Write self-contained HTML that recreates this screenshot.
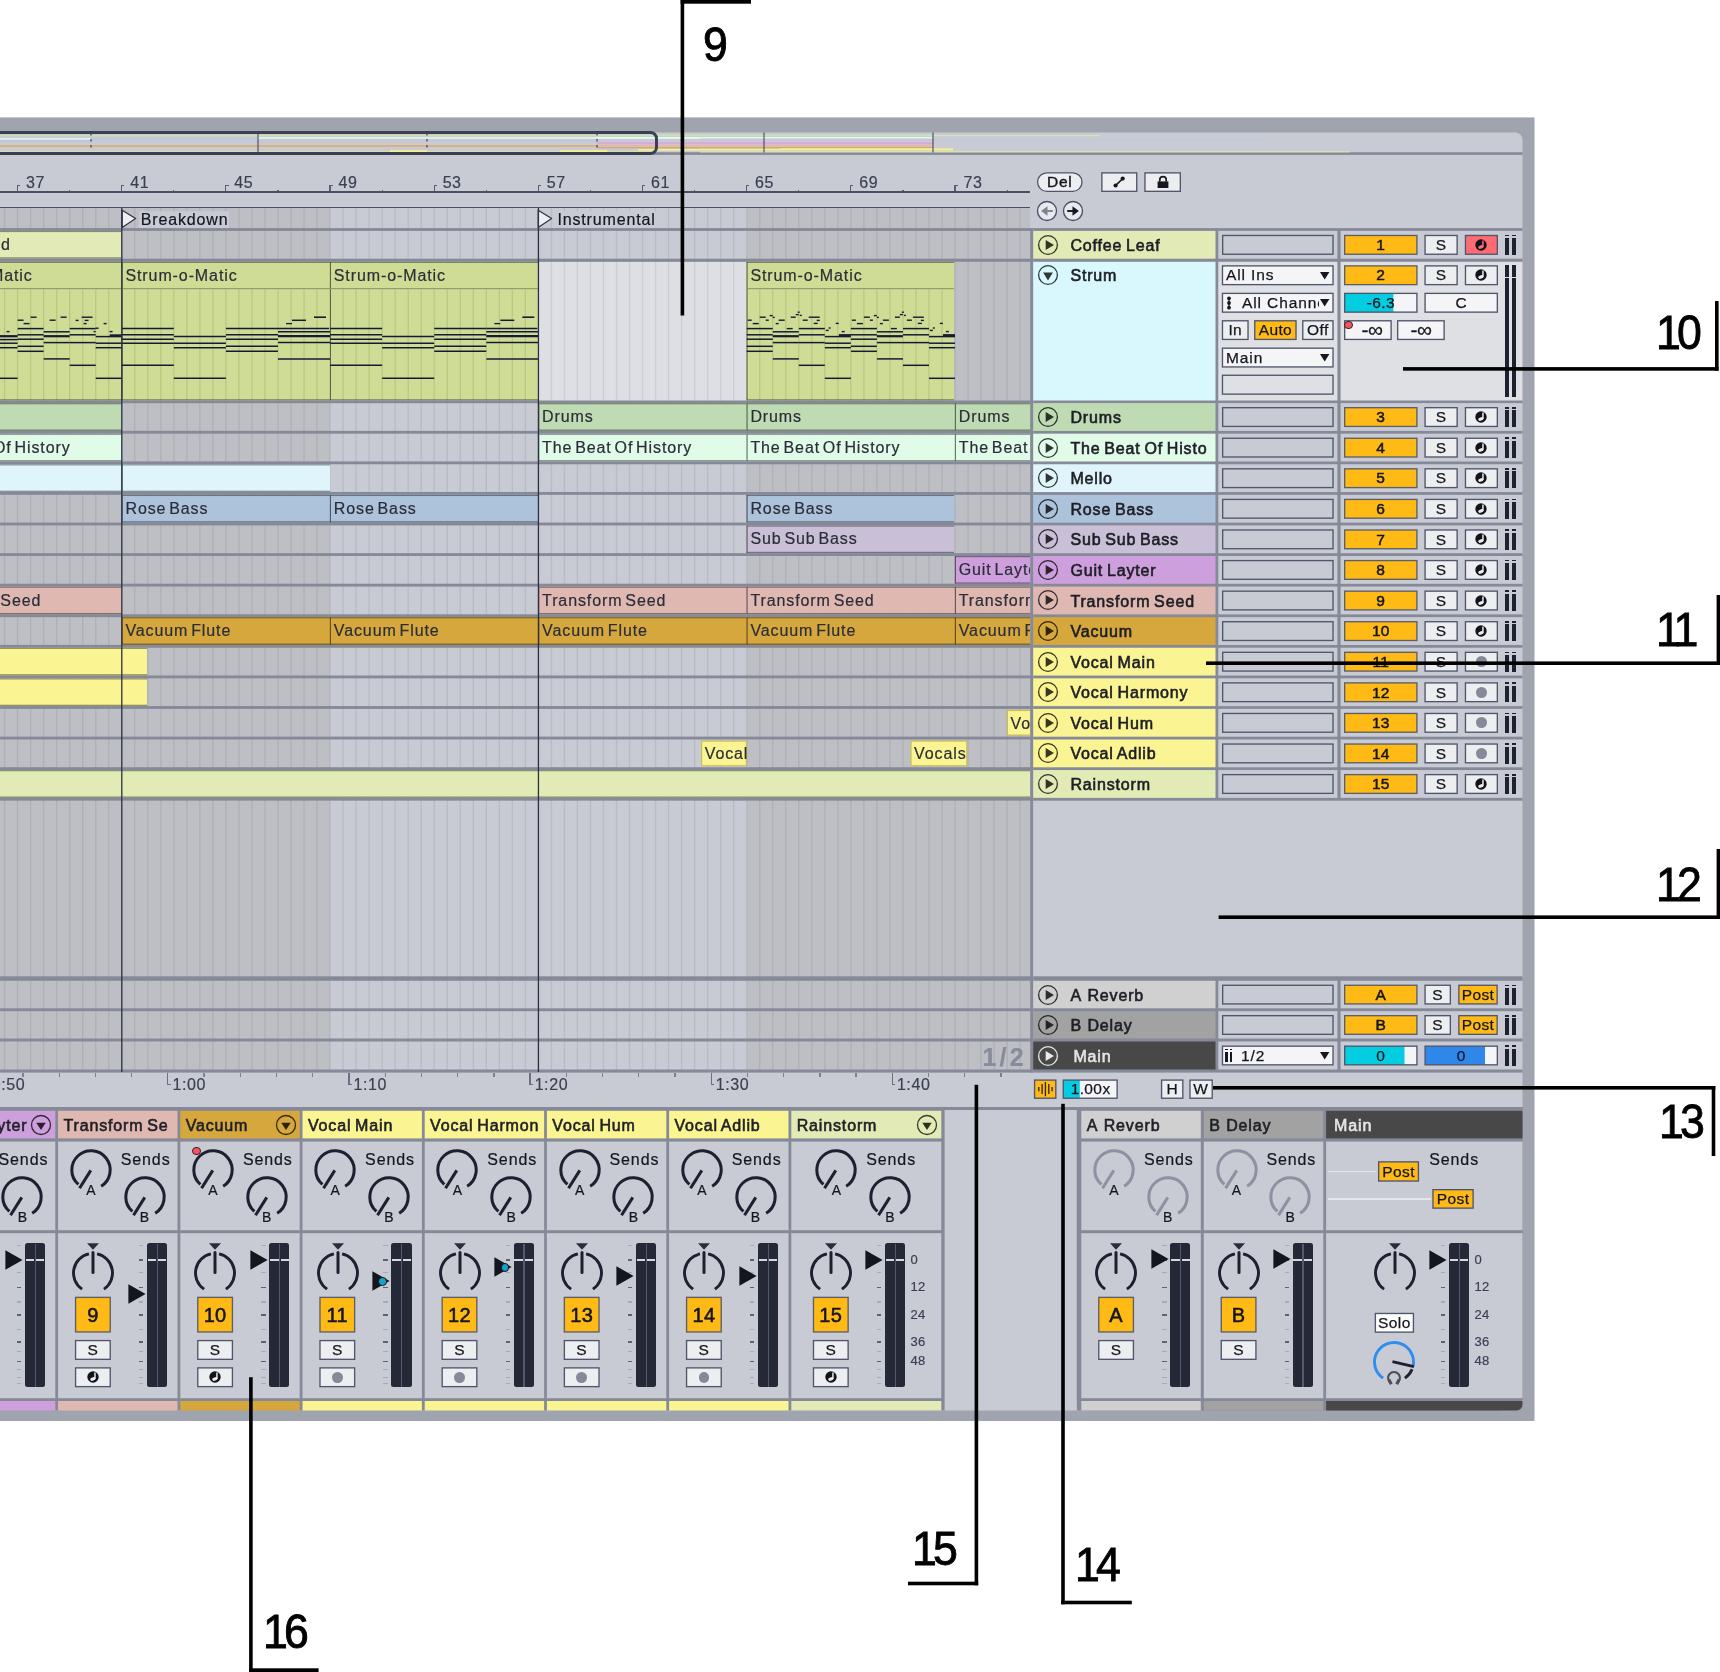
<!DOCTYPE html>
<html lang="en"><head><meta charset="utf-8"><title>Ableton Live – Arrangement and Mixer</title>
<style>
html,body{margin:0;padding:0}
body{width:1720px;height:1672px;position:relative;overflow:hidden;background:#fff;font-family:"Liberation Sans",sans-serif;font-size:16px;color:#15161f;-webkit-text-stroke:.2px}
div,i,svg,.t,.co{position:absolute;box-sizing:border-box;display:block}
svg{overflow:visible}
body>div{will-change:transform}
.t{white-space:nowrap;transform:translateY(-46%);line-height:1;letter-spacing:.9px}
.rn{font-size:16px;color:#3a3f52;letter-spacing:.6px}
.mk{background:#c8cbd4;line-height:17px;padding-left:2px;letter-spacing:.85px}
.kl{font-size:14px;width:20px;text-align:center;letter-spacing:0}
.sc{font-size:13px;color:#3a3f52;letter-spacing:.5px}
.clip{overflow:hidden;white-space:nowrap;line-height:28px;padding-left:3.7px;color:#2b2d38;letter-spacing:.9px;word-spacing:-2.5px}
.clip span{display:inline-block}
.nm{overflow:hidden;white-space:nowrap;line-height:29.2px;padding-left:37.2px;letter-spacing:.85px;word-spacing:-1.5px;color:#1d1e26;-webkit-text-stroke:.6px}
.sh{overflow:hidden;white-space:nowrap;line-height:29px;padding-left:5.4px;letter-spacing:.85px;word-spacing:-1.5px;-webkit-text-stroke:.6px}
.bx{display:flex;align-items:center;justify-content:center;white-space:nowrap;overflow:hidden;letter-spacing:.4px;line-height:1;padding-top:0;font-size:15.5px;-webkit-text-stroke:.25px}
.pill{letter-spacing:.8px;-webkit-text-stroke:.4px}
.num{letter-spacing:.3px;-webkit-text-stroke:.5px}
.big{font-size:20px;letter-spacing:.3px;-webkit-text-stroke:.55px}
.sel{justify-content:flex-start;padding-left:4.2px;letter-spacing:.9px}
.inf{font-size:21px;letter-spacing:-.5px}
.co{font-size:48px;line-height:35px;height:35px;letter-spacing:-4.2px;transform:scaleX(.93);transform-origin:0 0;white-space:nowrap;color:#000;-webkit-text-stroke:.9px #000}
</style></head>
<body>
<div id="window" style="left:0;top:0;width:1720px;height:1672px">
<svg width="1720" height="1672" style="left:0;top:0"><rect x="-30" y="117.4" width="1564.5" height="1303.6" fill="#a0a4ae"/><rect x="-30" y="132.4" width="1552.5" height="1278.1" fill="#c8cbd4" rx="7.5"/></svg>
</div>
<div id="overview" style="left:0;top:130px;width:1523px;height:26px">
<svg width="1523" height="26" style="left:0;top:0"><rect x="0" y="22.2" width="1522.5" height="2.7" fill="#868a98"/><rect x="0" y="5" width="258" height="1.2" fill="#d2e0a0"/><rect x="0" y="8" width="91" height="1.6" fill="#dff3fa"/><rect x="91" y="8" width="167" height="1.2" fill="#b9c7dc"/><rect x="0" y="10.5" width="258" height="1.2" fill="#bcc6d8"/><rect x="0" y="15.3" width="597" height="1.3" fill="#e3a458"/><rect x="0" y="21" width="655" height="1.2" fill="#d5e19a"/><rect x="258" y="5" width="339" height="1.2" fill="#d2e0a0"/><rect x="258" y="7.2" width="442" height="1.5" fill="#e3fbe9"/><rect x="258" y="10.5" width="339" height="1.2" fill="#bcc6d8"/><rect x="258" y="12.5" width="169" height="1.2" fill="#d9c2c0"/><rect x="390" y="20.2" width="37" height="1.8" fill="#f6f08a"/><rect x="560" y="20.2" width="47" height="1.8" fill="#f6f08a"/><rect x="638" y="19" width="62" height="1.6" fill="#f6f08a"/><rect x="597" y="4.6" width="336" height="1.6" fill="#cfe0b4"/><rect x="597" y="7" width="336" height="1.4" fill="#e3fbe9"/><rect x="597" y="9.6" width="336" height="1.4" fill="#c5c8dc"/><rect x="597" y="12.3" width="336" height="1.6" fill="#dba6d8"/><rect x="597" y="14.8" width="336" height="1.4" fill="#e6b0b0"/><rect x="597" y="17" width="336" height="1.3" fill="#e3a458"/><rect x="700" y="18.8" width="80" height="1.6" fill="#f6f08a"/><rect x="780" y="18.2" width="153" height="2.2" fill="#f6f08a"/><rect x="933" y="18.4" width="20" height="2" fill="#f6f08a"/><rect x="933" y="5" width="167" height="1.2" fill="#dbe4b0"/><rect x="933" y="9.6" width="337" height="1" fill="#bccbe0"/><rect x="700" y="21.2" width="650" height="1.2" fill="#dde6a8"/><rect x="90.4" y="3" width="1.2" height="2.5" fill="#3a3f52"/><rect x="90.4" y="9" width="1.2" height="2.5" fill="#3a3f52"/><rect x="90.4" y="15" width="1.2" height="2.5" fill="#3a3f52"/><rect x="257.45" y="2.5" width="1.1" height="20" fill="#454a5e"/><rect x="426.4" y="3" width="1.2" height="2.5" fill="#3a3f52"/><rect x="426.4" y="9" width="1.2" height="2.5" fill="#3a3f52"/><rect x="426.4" y="15" width="1.2" height="2.5" fill="#3a3f52"/><rect x="596.4" y="3" width="1.2" height="2.5" fill="#3a3f52"/><rect x="596.4" y="9" width="1.2" height="2.5" fill="#3a3f52"/><rect x="596.4" y="15" width="1.2" height="2.5" fill="#3a3f52"/><rect x="763.45" y="2.5" width="1.1" height="20" fill="#454a5e"/><rect x="932.45" y="2.5" width="1.1" height="20" fill="#454a5e"/></svg>
<div style="left:-20px;top:.5px;width:677.5px;height:24px;border:3px solid #3a3f54;border-radius:7.5px"></div>
</div>
<div id="ruler" style="left:0;top:156px;width:1031px;height:52px">
<i style="left:-87.17px;top:29px;width:1.2px;height:7px;background:#5a5f72"></i>
<i style="left:-35.09px;top:33.6px;width:1.2px;height:2.4px;background:#5a5f72"></i>
<i style="left:-86.57px;top:29px;width:2.6px;height:1.2px;background:#5a5f72"></i>
<span class="t rn" style="left:-78.17px;top:26.3px">33</span>
<i style="left:16.99px;top:29px;width:1.2px;height:7px;background:#5a5f72"></i>
<i style="left:69.07px;top:33.6px;width:1.2px;height:2.4px;background:#5a5f72"></i>
<i style="left:17.59px;top:29px;width:2.6px;height:1.2px;background:#5a5f72"></i>
<span class="t rn" style="left:25.99px;top:26.3px">37</span>
<i style="left:121.15px;top:29px;width:1.2px;height:7px;background:#5a5f72"></i>
<i style="left:173.23px;top:33.6px;width:1.2px;height:2.4px;background:#5a5f72"></i>
<i style="left:121.75px;top:29px;width:2.6px;height:1.2px;background:#5a5f72"></i>
<span class="t rn" style="left:130.15px;top:26.3px">41</span>
<i style="left:225.31px;top:29px;width:1.2px;height:7px;background:#5a5f72"></i>
<i style="left:277.39px;top:33.6px;width:1.2px;height:2.4px;background:#5a5f72"></i>
<i style="left:225.91px;top:29px;width:2.6px;height:1.2px;background:#5a5f72"></i>
<span class="t rn" style="left:234.31px;top:26.3px">45</span>
<i style="left:329.47px;top:29px;width:1.2px;height:7px;background:#5a5f72"></i>
<i style="left:381.55px;top:33.6px;width:1.2px;height:2.4px;background:#5a5f72"></i>
<i style="left:330.07px;top:29px;width:2.6px;height:1.2px;background:#5a5f72"></i>
<span class="t rn" style="left:338.47px;top:26.3px">49</span>
<i style="left:433.63px;top:29px;width:1.2px;height:7px;background:#5a5f72"></i>
<i style="left:485.71px;top:33.6px;width:1.2px;height:2.4px;background:#5a5f72"></i>
<i style="left:434.23px;top:29px;width:2.6px;height:1.2px;background:#5a5f72"></i>
<span class="t rn" style="left:442.63px;top:26.3px">53</span>
<i style="left:537.79px;top:29px;width:1.2px;height:7px;background:#5a5f72"></i>
<i style="left:589.87px;top:33.6px;width:1.2px;height:2.4px;background:#5a5f72"></i>
<i style="left:538.39px;top:29px;width:2.6px;height:1.2px;background:#5a5f72"></i>
<span class="t rn" style="left:546.79px;top:26.3px">57</span>
<i style="left:641.95px;top:29px;width:1.2px;height:7px;background:#5a5f72"></i>
<i style="left:694.03px;top:33.6px;width:1.2px;height:2.4px;background:#5a5f72"></i>
<i style="left:642.55px;top:29px;width:2.6px;height:1.2px;background:#5a5f72"></i>
<span class="t rn" style="left:650.95px;top:26.3px">61</span>
<i style="left:746.11px;top:29px;width:1.2px;height:7px;background:#5a5f72"></i>
<i style="left:798.19px;top:33.6px;width:1.2px;height:2.4px;background:#5a5f72"></i>
<i style="left:746.71px;top:29px;width:2.6px;height:1.2px;background:#5a5f72"></i>
<span class="t rn" style="left:755.11px;top:26.3px">65</span>
<i style="left:850.27px;top:29px;width:1.2px;height:7px;background:#5a5f72"></i>
<i style="left:902.35px;top:33.6px;width:1.2px;height:2.4px;background:#5a5f72"></i>
<i style="left:850.87px;top:29px;width:2.6px;height:1.2px;background:#5a5f72"></i>
<span class="t rn" style="left:859.27px;top:26.3px">69</span>
<i style="left:954.43px;top:29px;width:1.2px;height:7px;background:#5a5f72"></i>
<i style="left:1006.51px;top:33.6px;width:1.2px;height:2.4px;background:#5a5f72"></i>
<i style="left:955.03px;top:29px;width:2.6px;height:1.2px;background:#5a5f72"></i>
<span class="t rn" style="left:963.43px;top:26.3px">73</span>
<i style="left:0;top:35.4px;width:1030px;height:1.2px;background:#4a4f62"></i>
<i style="left:0;top:51.4px;width:1030px;height:1.2px;background:#4a4f62"></i>
</div>
<div id="arrangement" style="left:0;top:0;width:1034px;height:1073px">
<div style="left:0px;top:208px;width:1030.2px;height:864px;background:#bebfc4"></div>
<div style="left:330.07px;top:208px;width:416.64px;height:864px;background:#c8cbd4"></div>
<div style="left:538.39px;top:261.6px;width:208.32px;height:139px;background:#dedfe4"></div>
<svg width="1034" height="1073" style="left:0;top:0"><path d="M4.57 208V1072M17.59 208V1072M30.61 208V1072M43.63 208V1072M56.65 208V1072M69.67 208V1072M82.69 208V1072M95.71 208V1072M108.73 208V1072M121.75 208V1072M134.77 208V1072M147.79 208V1072M160.81 208V1072M173.83 208V1072M186.85 208V1072M199.87 208V1072M212.89 208V1072M225.91 208V1072M238.93 208V1072M251.95 208V1072M264.97 208V1072M277.99 208V1072M291.01 208V1072M304.03 208V1072M317.05 208V1072M330.07 208V1072M343.09 208V1072M356.11 208V1072M369.13 208V1072M382.15 208V1072M395.17 208V1072M408.19 208V1072M421.21 208V1072M434.23 208V1072M447.25 208V1072M460.27 208V1072M473.29 208V1072M486.31 208V1072M499.33 208V1072M512.35 208V1072M525.37 208V1072M538.39 208V1072M551.41 208V1072M564.43 208V1072M577.45 208V1072M590.47 208V1072M603.49 208V1072M616.51 208V1072M629.53 208V1072M642.55 208V1072M655.57 208V1072M668.59 208V1072M681.61 208V1072M694.63 208V1072M707.65 208V1072M720.67 208V1072M733.69 208V1072M746.71 208V1072M759.73 208V1072M772.75 208V1072M785.77 208V1072M798.79 208V1072M811.81 208V1072M824.83 208V1072M837.85 208V1072M850.87 208V1072M863.89 208V1072M876.91 208V1072M889.93 208V1072M902.95 208V1072M915.97 208V1072M928.99 208V1072M942.01 208V1072M955.03 208V1072M968.05 208V1072M981.07 208V1072M994.09 208V1072M1007.11 208V1072M1020.13 208V1072" stroke="#000" stroke-opacity=".075" stroke-width="1.4" fill="none"/></svg>
<svg width="1034" height="1073" style="left:0;top:0"><rect x="-86.57" y="230.9" width="208.32" height="27.8" fill="#e2ebb6"/><rect x="-86.57" y="230.9" width="208.32" height="1.2" fill="#878d6d"/><rect x="-86.57" y="257.3" width="208.32" height="1.4" fill="#878d6d"/><rect x="-60" y="403.1" width="181.75" height="27.8" fill="#bedbb4"/><rect x="-60" y="403.1" width="181.75" height="1.2" fill="#72836c"/><rect x="-60" y="429.5" width="181.75" height="1.4" fill="#72836c"/><rect x="538.39" y="403.1" width="208.32" height="27.8" fill="#bedbb4"/><rect x="538.39" y="403.1" width="208.32" height="1.2" fill="#72836c"/><rect x="538.39" y="429.5" width="208.32" height="1.4" fill="#72836c"/><rect x="538.19" y="403.1" width="1.1" height="27.8" fill="#556251"/><rect x="746.71" y="403.1" width="208.32" height="27.8" fill="#bedbb4"/><rect x="746.71" y="403.1" width="208.32" height="1.2" fill="#72836c"/><rect x="746.71" y="429.5" width="208.32" height="1.4" fill="#72836c"/><rect x="746.51" y="403.1" width="1.1" height="27.8" fill="#556251"/><rect x="955.03" y="403.1" width="75.17" height="27.8" fill="#bedbb4"/><rect x="955.03" y="403.1" width="75.17" height="1.2" fill="#72836c"/><rect x="955.03" y="429.5" width="75.17" height="1.4" fill="#72836c"/><rect x="954.83" y="403.1" width="1.1" height="27.8" fill="#556251"/><rect x="-86.57" y="433.68" width="208.32" height="27.8" fill="#e0fbe8"/><rect x="-86.57" y="433.68" width="208.32" height="1.2" fill="#86968b"/><rect x="-86.57" y="460.08" width="208.32" height="1.4" fill="#86968b"/><rect x="538.39" y="433.68" width="208.32" height="27.8" fill="#e0fbe8"/><rect x="538.39" y="433.68" width="208.32" height="1.2" fill="#86968b"/><rect x="538.39" y="460.08" width="208.32" height="1.4" fill="#86968b"/><rect x="538.19" y="433.68" width="1.1" height="27.8" fill="#647068"/><rect x="746.71" y="433.68" width="208.32" height="27.8" fill="#e0fbe8"/><rect x="746.71" y="433.68" width="208.32" height="1.2" fill="#86968b"/><rect x="746.71" y="460.08" width="208.32" height="1.4" fill="#86968b"/><rect x="746.51" y="433.68" width="1.1" height="27.8" fill="#647068"/><rect x="955.03" y="433.68" width="75.17" height="27.8" fill="#e0fbe8"/><rect x="955.03" y="433.68" width="75.17" height="1.2" fill="#86968b"/><rect x="955.03" y="460.08" width="75.17" height="1.4" fill="#86968b"/><rect x="954.83" y="433.68" width="1.1" height="27.8" fill="#647068"/><rect x="-60" y="464.26" width="181.75" height="27.8" fill="#e0f5fb"/><rect x="-60" y="464.26" width="181.75" height="1.2" fill="#869396"/><rect x="-60" y="490.66" width="181.75" height="1.4" fill="#869396"/><rect x="121.75" y="464.26" width="208.32" height="27.8" fill="#e0f5fb"/><rect x="121.75" y="464.26" width="208.32" height="1.2" fill="#869396"/><rect x="121.75" y="490.66" width="208.32" height="1.4" fill="#869396"/><rect x="121.55" y="464.26" width="1.1" height="27.8" fill="#646e70"/><rect x="121.75" y="494.84" width="208.32" height="27.8" fill="#adc3dc"/><rect x="121.75" y="494.84" width="208.32" height="1.2" fill="#677584"/><rect x="121.75" y="521.24" width="208.32" height="1.4" fill="#677584"/><rect x="121.55" y="494.84" width="1.1" height="27.8" fill="#4d5763"/><rect x="330.07" y="494.84" width="208.32" height="27.8" fill="#adc3dc"/><rect x="330.07" y="494.84" width="208.32" height="1.2" fill="#677584"/><rect x="330.07" y="521.24" width="208.32" height="1.4" fill="#677584"/><rect x="329.87" y="494.84" width="1.1" height="27.8" fill="#4d5763"/><rect x="746.71" y="494.84" width="207.32" height="27.8" fill="#adc3dc"/><rect x="746.71" y="494.84" width="207.32" height="1.2" fill="#677584"/><rect x="746.71" y="521.24" width="207.32" height="1.4" fill="#677584"/><rect x="746.51" y="494.84" width="1.1" height="27.8" fill="#4d5763"/><rect x="746.71" y="525.42" width="207.32" height="27.8" fill="#c9bfd6"/><rect x="746.71" y="525.42" width="207.32" height="1.2" fill="#787280"/><rect x="746.71" y="551.82" width="207.32" height="1.4" fill="#787280"/><rect x="746.51" y="525.42" width="1.1" height="27.8" fill="#5a5560"/><rect x="955.03" y="556" width="75.17" height="27.8" fill="#cd9fdc"/><rect x="955.03" y="556" width="75.17" height="1.2" fill="#7b5f84"/><rect x="955.03" y="582.4" width="75.17" height="1.4" fill="#7b5f84"/><rect x="954.83" y="556" width="1.1" height="27.8" fill="#5c4763"/><rect x="-86.57" y="586.58" width="208.32" height="27.8" fill="#dfb8b2"/><rect x="-86.57" y="586.58" width="208.32" height="1.2" fill="#856e6a"/><rect x="-86.57" y="612.98" width="208.32" height="1.4" fill="#856e6a"/><rect x="538.39" y="586.58" width="208.32" height="27.8" fill="#dfb8b2"/><rect x="538.39" y="586.58" width="208.32" height="1.2" fill="#856e6a"/><rect x="538.39" y="612.98" width="208.32" height="1.4" fill="#856e6a"/><rect x="538.19" y="586.58" width="1.1" height="27.8" fill="#645250"/><rect x="746.71" y="586.58" width="208.32" height="27.8" fill="#dfb8b2"/><rect x="746.71" y="586.58" width="208.32" height="1.2" fill="#856e6a"/><rect x="746.71" y="612.98" width="208.32" height="1.4" fill="#856e6a"/><rect x="746.51" y="586.58" width="1.1" height="27.8" fill="#645250"/><rect x="955.03" y="586.58" width="75.17" height="27.8" fill="#dfb8b2"/><rect x="955.03" y="586.58" width="75.17" height="1.2" fill="#856e6a"/><rect x="955.03" y="612.98" width="75.17" height="1.4" fill="#856e6a"/><rect x="954.83" y="586.58" width="1.1" height="27.8" fill="#645250"/><rect x="121.75" y="617.16" width="208.32" height="27.8" fill="#d5a73c"/><rect x="121.75" y="617.16" width="208.32" height="1.2" fill="#7f6424"/><rect x="121.75" y="643.56" width="208.32" height="1.4" fill="#7f6424"/><rect x="121.55" y="617.16" width="1.1" height="27.8" fill="#5f4b1b"/><rect x="330.07" y="617.16" width="208.32" height="27.8" fill="#d5a73c"/><rect x="330.07" y="617.16" width="208.32" height="1.2" fill="#7f6424"/><rect x="330.07" y="643.56" width="208.32" height="1.4" fill="#7f6424"/><rect x="329.87" y="617.16" width="1.1" height="27.8" fill="#5f4b1b"/><rect x="538.39" y="617.16" width="208.32" height="27.8" fill="#d5a73c"/><rect x="538.39" y="617.16" width="208.32" height="1.2" fill="#7f6424"/><rect x="538.39" y="643.56" width="208.32" height="1.4" fill="#7f6424"/><rect x="538.19" y="617.16" width="1.1" height="27.8" fill="#5f4b1b"/><rect x="746.71" y="617.16" width="208.32" height="27.8" fill="#d5a73c"/><rect x="746.71" y="617.16" width="208.32" height="1.2" fill="#7f6424"/><rect x="746.71" y="643.56" width="208.32" height="1.4" fill="#7f6424"/><rect x="746.51" y="617.16" width="1.1" height="27.8" fill="#5f4b1b"/><rect x="955.03" y="617.16" width="75.17" height="27.8" fill="#d5a73c"/><rect x="955.03" y="617.16" width="75.17" height="1.2" fill="#7f6424"/><rect x="955.03" y="643.56" width="75.17" height="1.4" fill="#7f6424"/><rect x="954.83" y="617.16" width="1.1" height="27.8" fill="#5f4b1b"/><rect x="-60" y="647.74" width="207" height="27.8" fill="#faf492"/><rect x="-60" y="647.74" width="207" height="1.2" fill="#969257"/><rect x="-60" y="674.14" width="207" height="1.4" fill="#969257"/><rect x="-60" y="678.32" width="207" height="27.8" fill="#faf492"/><rect x="-60" y="678.32" width="207" height="1.2" fill="#969257"/><rect x="-60" y="704.72" width="207" height="1.4" fill="#969257"/><rect x="1006.8" y="709.9" width="23.4" height="25.8" fill="#c9be5c"/><rect x="1008" y="711.1" width="22.2" height="23.4" fill="#faf492"/><rect x="701" y="740.48" width="46" height="25.8" fill="#c9be5c"/><rect x="702.2" y="741.68" width="43.6" height="23.4" fill="#faf492"/><rect x="910.4" y="740.48" width="57" height="25.8" fill="#c9be5c"/><rect x="911.6" y="741.68" width="54.6" height="23.4" fill="#faf492"/><rect x="-60" y="770.06" width="1090.2" height="27.8" fill="#e2ebb6"/><rect x="-60" y="770.06" width="1090.2" height="1.2" fill="#878d6d"/><rect x="-60" y="796.46" width="1090.2" height="1.4" fill="#878d6d"/><rect x="-86.57" y="261.8" width="208.32" height="138.7" fill="#cfdc95"/><rect x="-86.57" y="261.8" width="208.32" height="1.2" fill="#7c8459"/><rect x="-86.57" y="399.2" width="208.32" height="1.3" fill="#7c8459"/><rect x="-86.77" y="261.8" width="1.1" height="138.7" fill="#5d6343"/><rect x="-86.57" y="288" width="208.32" height="1.2" fill="#959e6b"/><rect x="121.75" y="261.8" width="208.32" height="138.7" fill="#cfdc95"/><rect x="121.75" y="261.8" width="208.32" height="1.2" fill="#7c8459"/><rect x="121.75" y="399.2" width="208.32" height="1.3" fill="#7c8459"/><rect x="121.55" y="261.8" width="1.1" height="138.7" fill="#5d6343"/><rect x="121.75" y="288" width="208.32" height="1.2" fill="#959e6b"/><rect x="330.07" y="261.8" width="208.32" height="138.7" fill="#cfdc95"/><rect x="330.07" y="261.8" width="208.32" height="1.2" fill="#7c8459"/><rect x="330.07" y="399.2" width="208.32" height="1.3" fill="#7c8459"/><rect x="329.87" y="261.8" width="1.1" height="138.7" fill="#5d6343"/><rect x="330.07" y="288" width="208.32" height="1.2" fill="#959e6b"/><rect x="746.71" y="261.8" width="207.32" height="138.7" fill="#cfdc95"/><rect x="746.71" y="261.8" width="207.32" height="1.2" fill="#7c8459"/><rect x="746.71" y="399.2" width="207.32" height="1.3" fill="#7c8459"/><rect x="746.51" y="261.8" width="1.1" height="138.7" fill="#5d6343"/><rect x="746.71" y="288" width="207.32" height="1.2" fill="#959e6b"/></svg>
<div class="clip" style="left:-86.57px;top:230.9px;width:208.32px;height:27.8px;"><span style="width:93.6px;text-align:right">nd</span></div>
<div class="clip" style="left:538.39px;top:403.1px;width:208.32px;height:27.8px;"><span>Drums</span></div>
<div class="clip" style="left:746.71px;top:403.1px;width:208.32px;height:27.8px;"><span>Drums</span></div>
<div class="clip" style="left:955.03px;top:403.1px;width:75.17px;height:27.8px;"><span>Drums</span></div>
<div class="clip" style="left:-86.57px;top:433.68px;width:208.32px;height:27.8px;"><span style="width:153.5px;text-align:right">The Beat Of History</span></div>
<div class="clip" style="left:538.39px;top:433.68px;width:208.32px;height:27.8px;"><span>The Beat Of History</span></div>
<div class="clip" style="left:746.71px;top:433.68px;width:208.32px;height:27.8px;"><span>The Beat Of History</span></div>
<div class="clip" style="left:955.03px;top:433.68px;width:75.17px;height:27.8px;"><span>The Beat Of History</span></div>
<div class="clip" style="left:121.75px;top:494.84px;width:208.32px;height:27.8px;"><span>Rose Bass</span></div>
<div class="clip" style="left:330.07px;top:494.84px;width:208.32px;height:27.8px;"><span>Rose Bass</span></div>
<div class="clip" style="left:746.71px;top:494.84px;width:207.32px;height:27.8px;"><span>Rose Bass</span></div>
<div class="clip" style="left:746.71px;top:525.42px;width:207.32px;height:27.8px;"><span>Sub Sub Bass</span></div>
<div class="clip" style="left:955.03px;top:556px;width:75.17px;height:27.8px;"><span>Guit Layter</span></div>
<div class="clip" style="left:-86.57px;top:586.58px;width:208.32px;height:27.8px;"><span style="width:123px;text-align:right">Transform Seed</span></div>
<div class="clip" style="left:538.39px;top:586.58px;width:208.32px;height:27.8px;"><span>Transform Seed</span></div>
<div class="clip" style="left:746.71px;top:586.58px;width:208.32px;height:27.8px;"><span>Transform Seed</span></div>
<div class="clip" style="left:955.03px;top:586.58px;width:75.17px;height:27.8px;"><span>Transform Seed</span></div>
<div class="clip" style="left:121.75px;top:617.16px;width:208.32px;height:27.8px;"><span>Vacuum Flute</span></div>
<div class="clip" style="left:330.07px;top:617.16px;width:208.32px;height:27.8px;"><span>Vacuum Flute</span></div>
<div class="clip" style="left:538.39px;top:617.16px;width:208.32px;height:27.8px;"><span>Vacuum Flute</span></div>
<div class="clip" style="left:746.71px;top:617.16px;width:208.32px;height:27.8px;"><span>Vacuum Flute</span></div>
<div class="clip" style="left:955.03px;top:617.16px;width:75.17px;height:27.8px;"><span>Vacuum Flute</span></div>
<div class="clip" style="left:1006.8px;top:709.9px;width:23.4px;height:25.8px;"><span>Vocals</span></div>
<div class="clip" style="left:701px;top:740.48px;width:46px;height:25.8px;"><span>Vocals</span></div>
<div class="clip" style="left:910.4px;top:740.48px;width:57px;height:25.8px;"><span>Vocals</span></div>
<div class="clip" style="left:-86.57px;top:261.8px;width:208.32px;height:27.4px;"><span style="width:115.6px;text-align:right">Strum-o-Matic</span></div>
<div class="clip" style="left:121.75px;top:261.8px;width:208.32px;height:27.4px;"><span>Strum-o-Matic</span></div>
<div class="clip" style="left:330.07px;top:261.8px;width:208.32px;height:27.4px;"><span>Strum-o-Matic</span></div>
<div class="clip" style="left:746.71px;top:261.8px;width:207.32px;height:27.4px;"><span>Strum-o-Matic</span></div>
<svg width="1034" height="410" style="left:0;top:0"><path d="M4.57 289.2V400.5M17.59 289.2V400.5M30.61 289.2V400.5M43.63 289.2V400.5M56.65 289.2V400.5M69.67 289.2V400.5M82.69 289.2V400.5M95.71 289.2V400.5M108.73 289.2V400.5M134.77 289.2V400.5M147.79 289.2V400.5M160.81 289.2V400.5M173.83 289.2V400.5M186.85 289.2V400.5M199.87 289.2V400.5M212.89 289.2V400.5M225.91 289.2V400.5M238.93 289.2V400.5M251.95 289.2V400.5M264.97 289.2V400.5M277.99 289.2V400.5M291.01 289.2V400.5M304.03 289.2V400.5M317.05 289.2V400.5M343.09 289.2V400.5M356.11 289.2V400.5M369.13 289.2V400.5M382.15 289.2V400.5M395.17 289.2V400.5M408.19 289.2V400.5M421.21 289.2V400.5M434.23 289.2V400.5M447.25 289.2V400.5M460.27 289.2V400.5M473.29 289.2V400.5M486.31 289.2V400.5M499.33 289.2V400.5M512.35 289.2V400.5M525.37 289.2V400.5M759.73 289.2V400.5M772.75 289.2V400.5M785.77 289.2V400.5M798.79 289.2V400.5M811.81 289.2V400.5M824.83 289.2V400.5M837.85 289.2V400.5M850.87 289.2V400.5M863.89 289.2V400.5M876.91 289.2V400.5M889.93 289.2V400.5M902.95 289.2V400.5M915.97 289.2V400.5M928.99 289.2V400.5M942.01 289.2V400.5" stroke="#4a5a10" stroke-opacity=".15" stroke-width="1.3" fill="none"/></svg>
<svg width="1034" height="410" style="left:0;top:0" stroke="#161a38" fill="none"><path d="M121.75 328.6H173.83" stroke-width="1.5"/><path d="M121.75 334.8H173.83" stroke-width="1.5"/><path d="M121.75 339.2H173.83" stroke-width="1.5"/><path d="M121.75 343.2H173.83" stroke-width="1.5"/><path d="M121.75 365.3H173.83" stroke-width="1.5"/><path d="M173.83 336.6H225.91" stroke-width="1.5"/><path d="M173.83 343.2H225.91" stroke-width="1.5"/><path d="M173.83 347.7H225.91" stroke-width="1.5"/><path d="M173.83 378.3H225.91" stroke-width="1.5"/><path d="M225.91 328.6H277.99" stroke-width="1.5"/><path d="M225.91 334.8H277.99" stroke-width="1.5"/><path d="M225.91 339.2H277.99" stroke-width="1.5"/><path d="M225.91 346.3H277.99" stroke-width="1.5"/><path d="M225.91 351.3H277.99" stroke-width="1.5"/><path d="M277.99 331.8H330.07" stroke-width="1.5"/><path d="M277.99 336.2H330.07" stroke-width="2.2"/><path d="M277.99 342.6H330.07" stroke-width="1.5"/><path d="M277.99 358.9H330.07" stroke-width="1.5"/><path d="M277.99 328.6H329.07" stroke-width="1.5"/><path d="M285.99 323.6H291.99" stroke-width="1.3"/><path d="M291.99 320.3H305.99" stroke-width="1.5"/><path d="M313.99 317.2H325.99" stroke-width="1.6"/><path d="M330.07 328.6H382.15" stroke-width="1.5"/><path d="M330.07 334.8H382.15" stroke-width="1.5"/><path d="M330.07 339.2H382.15" stroke-width="1.5"/><path d="M330.07 343.2H382.15" stroke-width="1.5"/><path d="M330.07 365.3H382.15" stroke-width="1.5"/><path d="M382.15 336.6H434.23" stroke-width="1.5"/><path d="M382.15 343.2H434.23" stroke-width="1.5"/><path d="M382.15 347.7H434.23" stroke-width="1.5"/><path d="M382.15 378.3H434.23" stroke-width="1.5"/><path d="M434.23 328.6H486.31" stroke-width="1.5"/><path d="M434.23 334.8H486.31" stroke-width="1.5"/><path d="M434.23 339.2H486.31" stroke-width="1.5"/><path d="M434.23 346.3H486.31" stroke-width="1.5"/><path d="M434.23 351.3H486.31" stroke-width="1.5"/><path d="M486.31 331.8H538.39" stroke-width="1.5"/><path d="M486.31 336.2H538.39" stroke-width="2.2"/><path d="M486.31 342.6H538.39" stroke-width="1.5"/><path d="M486.31 358.9H538.39" stroke-width="1.5"/><path d="M486.31 328.6H537.39" stroke-width="1.5"/><path d="M494.31 323.6H500.31" stroke-width="1.3"/><path d="M500.31 320.3H514.31" stroke-width="1.5"/><path d="M522.31 317.2H534.31" stroke-width="1.6"/><path d="M746.71 328.6H772.75" stroke-width="1.5"/><path d="M746.71 334.8H772.75" stroke-width="1.5"/><path d="M746.71 339.2H772.75" stroke-width="1.5"/><path d="M746.71 346.3H772.75" stroke-width="1.5"/><path d="M746.71 351.3H772.75" stroke-width="1.5"/><path d="M772.75 331.8H798.79" stroke-width="1.5"/><path d="M772.75 336.2H798.79" stroke-width="2.2"/><path d="M772.75 342.6H798.79" stroke-width="1.5"/><path d="M772.75 358.9H798.79" stroke-width="1.5"/><path d="M798.79 328.6H824.83" stroke-width="1.5"/><path d="M798.79 334.8H824.83" stroke-width="1.5"/><path d="M798.79 342.6H824.83" stroke-width="1.5"/><path d="M798.79 365.3H824.83" stroke-width="1.5"/><path d="M824.83 336.6H850.87" stroke-width="1.5"/><path d="M824.83 343.2H850.87" stroke-width="1.5"/><path d="M824.83 347.7H850.87" stroke-width="1.5"/><path d="M824.83 378.3H850.87" stroke-width="1.5"/><path d="M838.83 335.2H850.87" stroke-width="2.2"/><path d="M747.71 320.2H751.71" stroke-width="1.4"/><path d="M752.71 323.6H758.71" stroke-width="1.4"/><path d="M759.71 317.2H765.71" stroke-width="1.4"/><path d="M765.71 320.2H768.71" stroke-width="1.4"/><path d="M769.71 315.6H772.71" stroke-width="1.4"/><path d="M772.71 317.4H774.71" stroke-width="1.4"/><path d="M775.71 323.6H778.71" stroke-width="1.4"/><path d="M778.71 320.2H784.71" stroke-width="1.4"/><path d="M790.71 317.2H795.71" stroke-width="1.4"/><path d="M795.71 314.6H798.71" stroke-width="1.4"/><path d="M797.71 312.2H799.71" stroke-width="1.4"/><path d="M799.71 315.4H801.71" stroke-width="1.4"/><path d="M802.71 320.2H807.71" stroke-width="1.4"/><path d="M808.71 317.2H819.71" stroke-width="1.4"/><path d="M813.71 323.4H817.71" stroke-width="1.4"/><path d="M816.71 320.4H819.71" stroke-width="1.4"/><path d="M825.71 330.4H828.71" stroke-width="1.4"/><path d="M828.71 328H830.71" stroke-width="1.4"/><path d="M835.71 323.4H838.71" stroke-width="1.4"/><path d="M841.71 331.6H844.71" stroke-width="1.4"/><path d="M786.71 328.6H792.71" stroke-width="1.4"/><path d="M850.87 328.6H876.91" stroke-width="1.5"/><path d="M850.87 334.8H876.91" stroke-width="1.5"/><path d="M850.87 339.2H876.91" stroke-width="1.5"/><path d="M850.87 346.3H876.91" stroke-width="1.5"/><path d="M850.87 351.3H876.91" stroke-width="1.5"/><path d="M876.91 331.8H902.95" stroke-width="1.5"/><path d="M876.91 336.2H902.95" stroke-width="2.2"/><path d="M876.91 342.6H902.95" stroke-width="1.5"/><path d="M876.91 358.9H902.95" stroke-width="1.5"/><path d="M902.95 328.6H928.99" stroke-width="1.5"/><path d="M902.95 334.8H928.99" stroke-width="1.5"/><path d="M902.95 342.6H928.99" stroke-width="1.5"/><path d="M902.95 365.3H928.99" stroke-width="1.5"/><path d="M928.99 336.6H955.03" stroke-width="1.5"/><path d="M928.99 343.2H955.03" stroke-width="1.5"/><path d="M928.99 347.7H955.03" stroke-width="1.5"/><path d="M928.99 378.3H955.03" stroke-width="1.5"/><path d="M942.99 335.2H955.03" stroke-width="2.2"/><path d="M851.87 320.2H855.87" stroke-width="1.4"/><path d="M856.87 323.6H862.87" stroke-width="1.4"/><path d="M863.87 317.2H869.87" stroke-width="1.4"/><path d="M869.87 320.2H872.87" stroke-width="1.4"/><path d="M873.87 315.6H876.87" stroke-width="1.4"/><path d="M876.87 317.4H878.87" stroke-width="1.4"/><path d="M879.87 323.6H882.87" stroke-width="1.4"/><path d="M882.87 320.2H888.87" stroke-width="1.4"/><path d="M894.87 317.2H899.87" stroke-width="1.4"/><path d="M899.87 314.6H902.87" stroke-width="1.4"/><path d="M901.87 312.2H903.87" stroke-width="1.4"/><path d="M903.87 315.4H905.87" stroke-width="1.4"/><path d="M906.87 320.2H911.87" stroke-width="1.4"/><path d="M912.87 317.2H923.87" stroke-width="1.4"/><path d="M917.87 323.4H921.87" stroke-width="1.4"/><path d="M920.87 320.4H923.87" stroke-width="1.4"/><path d="M929.87 330.4H932.87" stroke-width="1.4"/><path d="M932.87 328H934.87" stroke-width="1.4"/><path d="M939.87 323.4H942.87" stroke-width="1.4"/><path d="M945.87 331.6H948.87" stroke-width="1.4"/><path d="M890.87 328.6H896.87" stroke-width="1.4"/><path d="M0 336.2H17.59" stroke-width="2.2"/><path d="M0 339.6H17.59" stroke-width="1.5"/><path d="M0 343.2H17.59" stroke-width="1.5"/><path d="M0 347.7H17.59" stroke-width="1.5"/><path d="M0 378.3H17.59" stroke-width="1.5"/><path d="M17.59 328.6H43.63" stroke-width="1.5"/><path d="M17.59 334.8H43.63" stroke-width="1.5"/><path d="M17.59 339.2H43.63" stroke-width="1.5"/><path d="M17.59 346.3H43.63" stroke-width="1.5"/><path d="M17.59 351.3H43.63" stroke-width="1.5"/><path d="M43.63 331.8H69.67" stroke-width="1.5"/><path d="M43.63 336.2H69.67" stroke-width="2.2"/><path d="M43.63 342.6H69.67" stroke-width="1.5"/><path d="M43.63 358.9H69.67" stroke-width="1.5"/><path d="M69.67 328.6H95.71" stroke-width="1.5"/><path d="M69.67 334.8H95.71" stroke-width="1.5"/><path d="M69.67 342.6H95.71" stroke-width="1.5"/><path d="M69.67 365.3H95.71" stroke-width="1.5"/><path d="M95.71 336.6H121.75" stroke-width="1.5"/><path d="M95.71 343.2H121.75" stroke-width="1.5"/><path d="M95.71 347.7H121.75" stroke-width="1.5"/><path d="M95.71 378.3H121.75" stroke-width="1.5"/><path d="M109.75 335.4H121.75" stroke-width="2.2"/><path d="M6.59 331.6H9.59" stroke-width="1.4"/><path d="M17.59 320.2H23.59" stroke-width="1.4"/><path d="M23.59 323.6H29.59" stroke-width="1.4"/><path d="M30.59 317.2H36.59" stroke-width="1.4"/><path d="M49.59 320.2H55.59" stroke-width="1.4"/><path d="M60.59 317.2H66.59" stroke-width="1.4"/><path d="M75.59 320.4H78.59" stroke-width="1.4"/><path d="M81.59 317.2H92.59" stroke-width="1.4"/><path d="M84.59 320.4H88.59" stroke-width="1.4"/><path d="M83.59 323.6H86.59" stroke-width="1.4"/><path d="M95.59 328.2H98.59" stroke-width="1.4"/><path d="M93.59 331.6H95.59" stroke-width="1.4"/><path d="M103.59 323.6H106.59" stroke-width="1.4"/><path d="M109.59 331.6H112.59" stroke-width="1.4"/></svg>
<span class="t mk" style="left:138.75px;top:218.6px;width:90px">Breakdown</span>
<svg width="20" height="24" style="left:120.75px;top:207px"><path d="M1.2 3.2L14.6 11.6L1.2 20.4Z" fill="#eeeff2" stroke="#2b3044" stroke-width="1.2" stroke-linejoin="round"/></svg>
<span class="t mk" style="left:555.39px;top:218.6px;width:103px">Instrumental</span>
<svg width="20" height="24" style="left:537.39px;top:207px"><path d="M1.2 3.2L14.6 11.6L1.2 20.4Z" fill="#eeeff2" stroke="#2b3044" stroke-width="1.2" stroke-linejoin="round"/></svg>
<svg width="1034" height="1073" style="left:0;top:0"><rect x="0" y="228.1" width="1033" height="2.8" fill="#868a98"/><rect x="0" y="258.7" width="1033" height="3.1" fill="#868a98"/><rect x="0" y="400.5" width="1033" height="2.7" fill="#868a98"/><rect x="0" y="430.83" width="1033" height="2.85" fill="#868a98"/><rect x="0" y="461.41" width="1033" height="2.85" fill="#868a98"/><rect x="0" y="491.99" width="1033" height="2.85" fill="#868a98"/><rect x="0" y="522.57" width="1033" height="2.85" fill="#868a98"/><rect x="0" y="553.15" width="1033" height="2.85" fill="#868a98"/><rect x="0" y="583.73" width="1033" height="2.85" fill="#868a98"/><rect x="0" y="614.31" width="1033" height="2.85" fill="#868a98"/><rect x="0" y="644.89" width="1033" height="2.85" fill="#868a98"/><rect x="0" y="675.47" width="1033" height="2.85" fill="#868a98"/><rect x="0" y="706.05" width="1033" height="2.85" fill="#868a98"/><rect x="0" y="736.63" width="1033" height="2.85" fill="#868a98"/><rect x="0" y="767.21" width="1033" height="2.85" fill="#868a98"/><rect x="0" y="797.79" width="1033" height="2.85" fill="#868a98"/><rect x="0" y="976.3" width="1033" height="4.5" fill="#868a98"/><rect x="0" y="1008.3" width="1033" height="2.9" fill="#868a98"/><rect x="0" y="1038.5" width="1033" height="3" fill="#868a98"/><rect x="0" y="1069.5" width="1033" height="3.1" fill="#868a98"/><rect x="121.15" y="208" width="1.3" height="864" fill="#2b3044"/><rect x="537.79" y="208" width="1.3" height="864" fill="#2b3044"/><rect x="1030.2" y="228.1" width="3" height="844.5" fill="#868a98"/></svg>
<span class="t" style="left:982.5px;top:1055.6px;font-size:25px;font-weight:700;color:#878b9a;letter-spacing:3.2px">1/2</span>
</div>
<div id="tracklist" style="left:0;top:0;width:1523px;height:1073px">
<svg width="1523" height="1073" style="left:0;top:0"><rect x="1033.2" y="228.1" width="489.3" height="844.5" fill="#868a98"/><rect x="1033.2" y="800.7" width="489.3" height="175.6" fill="#c8cbd4"/><rect x="1037.58" y="172.88" width="44.45" height="18.45" fill="#edeef0" stroke="#50566c" stroke-width="1.35" rx="9.23"/><rect x="1101.88" y="172.88" width="34.85" height="18.45" fill="#edeef0" stroke="#50566c" stroke-width="1.35"/><rect x="1144.97" y="172.88" width="35.35" height="18.45" fill="#edeef0" stroke="#50566c" stroke-width="1.35"/><rect x="1033.2" y="230.9" width="182.3" height="27.8" fill="#e2ebb6"/><rect x="1218.3" y="230.9" width="119.1" height="27.8" fill="#c8cbd4"/><rect x="1222.67" y="235.48" width="110.35" height="18.75" fill="none" stroke="#50566c" stroke-width="1.35"/><rect x="1340.6" y="230.9" width="181.9" height="27.8" fill="#c8cbd4"/><rect x="1344.67" y="235.48" width="72.25" height="18.75" fill="#ffba16" stroke="#5c5f68" stroke-width="1.35"/><rect x="1425.08" y="235.48" width="32.05" height="18.75" fill="#edeef0" stroke="#50566c" stroke-width="1.35"/><rect x="1465.47" y="235.48" width="31.85" height="18.75" fill="#ff6b73" stroke="#50566c" stroke-width="1.35"/><rect x="1033.2" y="403.1" width="182.3" height="27.8" fill="#bedbb4"/><rect x="1218.3" y="403.1" width="119.1" height="27.8" fill="#c8cbd4"/><rect x="1222.67" y="407.68" width="110.35" height="18.75" fill="none" stroke="#50566c" stroke-width="1.35"/><rect x="1340.6" y="403.1" width="181.9" height="27.8" fill="#c8cbd4"/><rect x="1344.67" y="407.68" width="72.25" height="18.75" fill="#ffba16" stroke="#5c5f68" stroke-width="1.35"/><rect x="1425.08" y="407.68" width="32.05" height="18.75" fill="#edeef0" stroke="#50566c" stroke-width="1.35"/><rect x="1465.47" y="407.68" width="31.85" height="18.75" fill="#edeef0" stroke="#50566c" stroke-width="1.35"/><rect x="1033.2" y="433.68" width="182.3" height="27.8" fill="#e0fbe8"/><rect x="1218.3" y="433.68" width="119.1" height="27.8" fill="#c8cbd4"/><rect x="1222.67" y="438.25" width="110.35" height="18.75" fill="none" stroke="#50566c" stroke-width="1.35"/><rect x="1340.6" y="433.68" width="181.9" height="27.8" fill="#c8cbd4"/><rect x="1344.67" y="438.25" width="72.25" height="18.75" fill="#ffba16" stroke="#5c5f68" stroke-width="1.35"/><rect x="1425.08" y="438.25" width="32.05" height="18.75" fill="#edeef0" stroke="#50566c" stroke-width="1.35"/><rect x="1465.47" y="438.25" width="31.85" height="18.75" fill="#edeef0" stroke="#50566c" stroke-width="1.35"/><rect x="1033.2" y="464.26" width="182.3" height="27.8" fill="#e0f5fb"/><rect x="1218.3" y="464.26" width="119.1" height="27.8" fill="#c8cbd4"/><rect x="1222.67" y="468.83" width="110.35" height="18.75" fill="none" stroke="#50566c" stroke-width="1.35"/><rect x="1340.6" y="464.26" width="181.9" height="27.8" fill="#c8cbd4"/><rect x="1344.67" y="468.83" width="72.25" height="18.75" fill="#ffba16" stroke="#5c5f68" stroke-width="1.35"/><rect x="1425.08" y="468.83" width="32.05" height="18.75" fill="#edeef0" stroke="#50566c" stroke-width="1.35"/><rect x="1465.47" y="468.83" width="31.85" height="18.75" fill="#edeef0" stroke="#50566c" stroke-width="1.35"/><rect x="1033.2" y="494.84" width="182.3" height="27.8" fill="#adc3dc"/><rect x="1218.3" y="494.84" width="119.1" height="27.8" fill="#c8cbd4"/><rect x="1222.67" y="499.42" width="110.35" height="18.75" fill="none" stroke="#50566c" stroke-width="1.35"/><rect x="1340.6" y="494.84" width="181.9" height="27.8" fill="#c8cbd4"/><rect x="1344.67" y="499.42" width="72.25" height="18.75" fill="#ffba16" stroke="#5c5f68" stroke-width="1.35"/><rect x="1425.08" y="499.42" width="32.05" height="18.75" fill="#edeef0" stroke="#50566c" stroke-width="1.35"/><rect x="1465.47" y="499.42" width="31.85" height="18.75" fill="#edeef0" stroke="#50566c" stroke-width="1.35"/><rect x="1033.2" y="525.42" width="182.3" height="27.8" fill="#c9bfd6"/><rect x="1218.3" y="525.42" width="119.1" height="27.8" fill="#c8cbd4"/><rect x="1222.67" y="529.99" width="110.35" height="18.75" fill="none" stroke="#50566c" stroke-width="1.35"/><rect x="1340.6" y="525.42" width="181.9" height="27.8" fill="#c8cbd4"/><rect x="1344.67" y="529.99" width="72.25" height="18.75" fill="#ffba16" stroke="#5c5f68" stroke-width="1.35"/><rect x="1425.08" y="529.99" width="32.05" height="18.75" fill="#edeef0" stroke="#50566c" stroke-width="1.35"/><rect x="1465.47" y="529.99" width="31.85" height="18.75" fill="#edeef0" stroke="#50566c" stroke-width="1.35"/><rect x="1033.2" y="556" width="182.3" height="27.8" fill="#cd9fdc"/><rect x="1218.3" y="556" width="119.1" height="27.8" fill="#c8cbd4"/><rect x="1222.67" y="560.57" width="110.35" height="18.75" fill="none" stroke="#50566c" stroke-width="1.35"/><rect x="1340.6" y="556" width="181.9" height="27.8" fill="#c8cbd4"/><rect x="1344.67" y="560.57" width="72.25" height="18.75" fill="#ffba16" stroke="#5c5f68" stroke-width="1.35"/><rect x="1425.08" y="560.57" width="32.05" height="18.75" fill="#edeef0" stroke="#50566c" stroke-width="1.35"/><rect x="1465.47" y="560.57" width="31.85" height="18.75" fill="#edeef0" stroke="#50566c" stroke-width="1.35"/><rect x="1033.2" y="586.58" width="182.3" height="27.8" fill="#dfb8b2"/><rect x="1218.3" y="586.58" width="119.1" height="27.8" fill="#c8cbd4"/><rect x="1222.67" y="591.15" width="110.35" height="18.75" fill="none" stroke="#50566c" stroke-width="1.35"/><rect x="1340.6" y="586.58" width="181.9" height="27.8" fill="#c8cbd4"/><rect x="1344.67" y="591.15" width="72.25" height="18.75" fill="#ffba16" stroke="#5c5f68" stroke-width="1.35"/><rect x="1425.08" y="591.15" width="32.05" height="18.75" fill="#edeef0" stroke="#50566c" stroke-width="1.35"/><rect x="1465.47" y="591.15" width="31.85" height="18.75" fill="#edeef0" stroke="#50566c" stroke-width="1.35"/><rect x="1033.2" y="617.16" width="182.3" height="27.8" fill="#d5a73c"/><rect x="1218.3" y="617.16" width="119.1" height="27.8" fill="#c8cbd4"/><rect x="1222.67" y="621.73" width="110.35" height="18.75" fill="none" stroke="#50566c" stroke-width="1.35"/><rect x="1340.6" y="617.16" width="181.9" height="27.8" fill="#c8cbd4"/><rect x="1344.67" y="621.73" width="72.25" height="18.75" fill="#ffba16" stroke="#5c5f68" stroke-width="1.35"/><rect x="1425.08" y="621.73" width="32.05" height="18.75" fill="#edeef0" stroke="#50566c" stroke-width="1.35"/><rect x="1465.47" y="621.73" width="31.85" height="18.75" fill="#edeef0" stroke="#50566c" stroke-width="1.35"/><rect x="1033.2" y="647.74" width="182.3" height="27.8" fill="#faf492"/><rect x="1218.3" y="647.74" width="119.1" height="27.8" fill="#c8cbd4"/><rect x="1222.67" y="652.31" width="110.35" height="18.75" fill="none" stroke="#50566c" stroke-width="1.35"/><rect x="1340.6" y="647.74" width="181.9" height="27.8" fill="#c8cbd4"/><rect x="1344.67" y="652.31" width="72.25" height="18.75" fill="#ffba16" stroke="#5c5f68" stroke-width="1.35"/><rect x="1425.08" y="652.31" width="32.05" height="18.75" fill="#edeef0" stroke="#50566c" stroke-width="1.35"/><rect x="1465.47" y="652.31" width="31.85" height="18.75" fill="#edeef0" stroke="#50566c" stroke-width="1.35"/><rect x="1033.2" y="678.32" width="182.3" height="27.8" fill="#faf492"/><rect x="1218.3" y="678.32" width="119.1" height="27.8" fill="#c8cbd4"/><rect x="1222.67" y="682.89" width="110.35" height="18.75" fill="none" stroke="#50566c" stroke-width="1.35"/><rect x="1340.6" y="678.32" width="181.9" height="27.8" fill="#c8cbd4"/><rect x="1344.67" y="682.89" width="72.25" height="18.75" fill="#ffba16" stroke="#5c5f68" stroke-width="1.35"/><rect x="1425.08" y="682.89" width="32.05" height="18.75" fill="#edeef0" stroke="#50566c" stroke-width="1.35"/><rect x="1465.47" y="682.89" width="31.85" height="18.75" fill="#edeef0" stroke="#50566c" stroke-width="1.35"/><rect x="1033.2" y="708.9" width="182.3" height="27.8" fill="#faf492"/><rect x="1218.3" y="708.9" width="119.1" height="27.8" fill="#c8cbd4"/><rect x="1222.67" y="713.47" width="110.35" height="18.75" fill="none" stroke="#50566c" stroke-width="1.35"/><rect x="1340.6" y="708.9" width="181.9" height="27.8" fill="#c8cbd4"/><rect x="1344.67" y="713.47" width="72.25" height="18.75" fill="#ffba16" stroke="#5c5f68" stroke-width="1.35"/><rect x="1425.08" y="713.47" width="32.05" height="18.75" fill="#edeef0" stroke="#50566c" stroke-width="1.35"/><rect x="1465.47" y="713.47" width="31.85" height="18.75" fill="#edeef0" stroke="#50566c" stroke-width="1.35"/><rect x="1033.2" y="739.48" width="182.3" height="27.8" fill="#faf492"/><rect x="1218.3" y="739.48" width="119.1" height="27.8" fill="#c8cbd4"/><rect x="1222.67" y="744.05" width="110.35" height="18.75" fill="none" stroke="#50566c" stroke-width="1.35"/><rect x="1340.6" y="739.48" width="181.9" height="27.8" fill="#c8cbd4"/><rect x="1344.67" y="744.05" width="72.25" height="18.75" fill="#ffba16" stroke="#5c5f68" stroke-width="1.35"/><rect x="1425.08" y="744.05" width="32.05" height="18.75" fill="#edeef0" stroke="#50566c" stroke-width="1.35"/><rect x="1465.47" y="744.05" width="31.85" height="18.75" fill="#edeef0" stroke="#50566c" stroke-width="1.35"/><rect x="1033.2" y="770.06" width="182.3" height="27.8" fill="#e2ebb6"/><rect x="1218.3" y="770.06" width="119.1" height="27.8" fill="#c8cbd4"/><rect x="1222.67" y="774.63" width="110.35" height="18.75" fill="none" stroke="#50566c" stroke-width="1.35"/><rect x="1340.6" y="770.06" width="181.9" height="27.8" fill="#c8cbd4"/><rect x="1344.67" y="774.63" width="72.25" height="18.75" fill="#ffba16" stroke="#5c5f68" stroke-width="1.35"/><rect x="1425.08" y="774.63" width="32.05" height="18.75" fill="#edeef0" stroke="#50566c" stroke-width="1.35"/><rect x="1465.47" y="774.63" width="31.85" height="18.75" fill="#edeef0" stroke="#50566c" stroke-width="1.35"/><rect x="1033.2" y="261.8" width="182.3" height="138.7" fill="#d9f8fd"/><rect x="1218.3" y="261.8" width="119.1" height="138.7" fill="#dfe0e4"/><rect x="1340.6" y="261.8" width="181.9" height="138.7" fill="#dfe0e4"/><rect x="1222.47" y="265.88" width="110.55" height="18.75" fill="#f5f5f7" stroke="#50566c" stroke-width="1.35"/><rect x="1222.47" y="293.38" width="110.55" height="18.75" fill="#f5f5f7" stroke="#50566c" stroke-width="1.35"/><rect x="1222.47" y="348.18" width="110.55" height="18.75" fill="#f5f5f7" stroke="#50566c" stroke-width="1.35"/><rect x="1222.47" y="320.78" width="25.55" height="18.65" fill="#edeef0" stroke="#50566c" stroke-width="1.35"/><rect x="1254.77" y="320.78" width="41.25" height="18.65" fill="#ffba16" stroke="#50566c" stroke-width="1.35"/><rect x="1302.77" y="320.78" width="30.25" height="18.65" fill="#edeef0" stroke="#50566c" stroke-width="1.35"/><rect x="1222.47" y="375.28" width="110.55" height="18.85" fill="none" stroke="#50566c" stroke-width="1.35"/><rect x="1344.67" y="265.88" width="72.25" height="18.75" fill="#ffba16" stroke="#5c5f68" stroke-width="1.35"/><rect x="1425.08" y="265.88" width="32.05" height="18.75" fill="#edeef0" stroke="#50566c" stroke-width="1.35"/><rect x="1465.47" y="265.88" width="31.85" height="18.75" fill="#edeef0" stroke="#50566c" stroke-width="1.35"/><rect x="1344.67" y="293.38" width="72.25" height="18.75" fill="#f5f5f7"/><rect x="1344.67" y="293.38" width="48.73" height="18.75" fill="#03cde0"/><rect x="1344.67" y="293.38" width="72.25" height="18.75" fill="none" stroke="#50566c" stroke-width="1.35"/><rect x="1425.08" y="293.38" width="72.25" height="18.75" fill="#f5f5f7" stroke="#50566c" stroke-width="1.35"/><rect x="1344.67" y="320.78" width="46.45" height="18.65" fill="#f5f5f7" stroke="#50566c" stroke-width="1.35"/><rect x="1397.67" y="320.78" width="46.45" height="18.65" fill="#f5f5f7" stroke="#50566c" stroke-width="1.35"/><rect x="1033.2" y="980.8" width="182.3" height="27.5" fill="#d0d0d0"/><rect x="1218.3" y="980.8" width="119.1" height="27.5" fill="#c8cbd4"/><rect x="1222.67" y="985.27" width="110.35" height="18.65" fill="none" stroke="#50566c" stroke-width="1.35"/><rect x="1340.6" y="980.8" width="181.9" height="27.5" fill="#c8cbd4"/><rect x="1344.67" y="985.27" width="72.25" height="18.65" fill="#ffba16" stroke="#5c5f68" stroke-width="1.35"/><rect x="1425.08" y="985.27" width="25.25" height="18.65" fill="#edeef0" stroke="#50566c" stroke-width="1.35"/><rect x="1458.88" y="985.27" width="38.25" height="18.65" fill="#ffba16" stroke="#50566c" stroke-width="1.35"/><rect x="1033.2" y="1011.2" width="182.3" height="27.3" fill="#a2a2a2"/><rect x="1218.3" y="1011.2" width="119.1" height="27.3" fill="#c8cbd4"/><rect x="1222.67" y="1015.67" width="110.35" height="18.65" fill="none" stroke="#50566c" stroke-width="1.35"/><rect x="1340.6" y="1011.2" width="181.9" height="27.3" fill="#c8cbd4"/><rect x="1344.67" y="1015.67" width="72.25" height="18.65" fill="#ffba16" stroke="#5c5f68" stroke-width="1.35"/><rect x="1425.08" y="1015.67" width="25.25" height="18.65" fill="#edeef0" stroke="#50566c" stroke-width="1.35"/><rect x="1458.88" y="1015.67" width="38.25" height="18.65" fill="#ffba16" stroke="#50566c" stroke-width="1.35"/><rect x="1033.2" y="1041.5" width="182.3" height="28" fill="#484848"/><rect x="1218.3" y="1041.5" width="119.1" height="28" fill="#c8cbd4"/><rect x="1340.6" y="1041.5" width="181.9" height="28" fill="#c8cbd4"/><rect x="1222.47" y="1046.17" width="110.55" height="18.65" fill="#f5f5f7" stroke="#50566c" stroke-width="1.35"/><rect x="1344.67" y="1046.17" width="72.25" height="18.65" fill="#f5f5f7"/><rect x="1344.67" y="1046.17" width="59.83" height="18.65" fill="#03cde0"/><rect x="1344.67" y="1046.17" width="72.25" height="18.65" fill="none" stroke="#50566c" stroke-width="1.35"/><rect x="1425.08" y="1046.17" width="72.25" height="18.65" fill="#f5f5f7"/><rect x="1425.08" y="1046.17" width="59.93" height="18.65" fill="#2f87ea"/><rect x="1425.08" y="1046.17" width="72.25" height="18.65" fill="none" stroke="#50566c" stroke-width="1.35"/></svg>
<div class="bx pill" style="left:1036.9px;top:172.2px;width:45.8px;height:19.8px;">Del</div>
<div class="bx " style="left:1101.2px;top:172.2px;width:36.2px;height:19.8px;"></div>
<svg width="16" height="14" viewBox="-8 -7 16 14" style="left:1111.3px;top:175px"><path d="M-3.3 3.4L3.6 -3.3" stroke="#15161f" stroke-width="1.6"/><circle cx="-3.4" cy="3.5" r="2.1" fill="#15161f"/><circle cx="3.7" cy="-3.4" r="2.1" fill="#15161f"/></svg>
<div class="bx " style="left:1144.3px;top:172.2px;width:36.7px;height:19.8px;"></div>
<svg width="14" height="14" viewBox="-7 -7 14 14" style="left:1155.7px;top:175.2px"><rect x="-5.4" y="-.6" width="10.8" height="6.6" fill="#15161f"/><path d="M-3.2 -.4V-2.2A3.2 3.2 0 0 1 3.2 -2.2V-.4" fill="none" stroke="#15161f" stroke-width="1.7"/></svg>
<svg width="22" height="22" viewBox="-11 -11 22 22" style="left:1035.9px;top:200.2px"><circle r="9.5" fill="#e8e9ec" stroke="#4a5068" stroke-width="1.35"/><path d="M5.8 0H-2" stroke="#7d8190" stroke-width="1.9"/><path d="M-5.9 0L0.5 -4.7V4.7Z" fill="#7d8190"/></svg>
<svg width="22" height="22" viewBox="-11 -11 22 22" style="left:1061.7px;top:200.2px"><circle r="9.5" fill="#e8e9ec" stroke="#4a5068" stroke-width="1.35"/><path d="M-5.8 0H2" stroke="#15161f" stroke-width="1.9"/><path d="M5.9 0L-0.5 -4.7V4.7Z" fill="#15161f"/></svg>
<div class="nm" style="left:1033.2px;top:230.9px;width:182.3px;height:27.8px;"><span>Coffee Leaf</span></div>
<svg width="22" height="22" viewBox="-11 -11 22 22" style="left:1037.4px;top:233.8px"><circle r="9.4" fill="none" stroke="#000" stroke-opacity="0.78" stroke-width="1.3"/><path d="M-2.3 -4.9L6 0L-2.3 4.9Z" fill="#000" fill-opacity="0.78"/></svg>
<div class="bx num" style="left:1344px;top:234.8px;width:73.6px;height:20.1px;">1</div>
<div class="bx " style="left:1424.4px;top:234.8px;width:33.4px;height:20.1px;">S</div>
<div class="bx " style="left:1464.8px;top:234.8px;width:33.2px;height:20.1px;"></div>
<svg width="14" height="14" viewBox="-7 -7 14 14" style="left:1474.4px;top:237.85px"><circle r="5.7" fill="#12131c"/><path d="M1.95 -4.4V2" stroke="#ff6b73" stroke-width="1.5"/><ellipse cx="-.2" cy="2" rx="2.7" ry="1.7" transform="rotate(-18 -.2 2)" fill="#ff6b73"/></svg>
<i style="left:1505px;top:234.7px;width:4.1px;height:1.7px;background:#1e2130"></i>
<i style="left:1505px;top:238.1px;width:4.1px;height:16.9px;background:#1e2130"></i>
<i style="left:1511.5px;top:234.7px;width:4.3px;height:1.7px;background:#1e2130"></i>
<i style="left:1511.5px;top:238.1px;width:4.3px;height:16.9px;background:#1e2130"></i>
<div class="nm" style="left:1033.2px;top:403.1px;width:182.3px;height:27.8px;"><span>Drums</span></div>
<svg width="22" height="22" viewBox="-11 -11 22 22" style="left:1037.4px;top:406px"><circle r="9.4" fill="none" stroke="#000" stroke-opacity="0.78" stroke-width="1.3"/><path d="M-2.3 -4.9L6 0L-2.3 4.9Z" fill="#000" fill-opacity="0.78"/></svg>
<div class="bx num" style="left:1344px;top:407px;width:73.6px;height:20.1px;">3</div>
<div class="bx " style="left:1424.4px;top:407px;width:33.4px;height:20.1px;">S</div>
<div class="bx " style="left:1464.8px;top:407px;width:33.2px;height:20.1px;"></div>
<svg width="14" height="14" viewBox="-7 -7 14 14" style="left:1474.4px;top:410.05px"><circle r="5.7" fill="#12131c"/><path d="M1.95 -4.4V2" stroke="#edeef0" stroke-width="1.5"/><ellipse cx="-.2" cy="2" rx="2.7" ry="1.7" transform="rotate(-18 -.2 2)" fill="#edeef0"/></svg>
<i style="left:1505px;top:406.9px;width:4.1px;height:1.7px;background:#1e2130"></i>
<i style="left:1505px;top:410.3px;width:4.1px;height:16.9px;background:#1e2130"></i>
<i style="left:1511.5px;top:406.9px;width:4.3px;height:1.7px;background:#1e2130"></i>
<i style="left:1511.5px;top:410.3px;width:4.3px;height:16.9px;background:#1e2130"></i>
<div class="nm" style="left:1033.2px;top:433.68px;width:182.3px;height:27.8px;"><span>The Beat Of Histo</span></div>
<svg width="22" height="22" viewBox="-11 -11 22 22" style="left:1037.4px;top:436.58px"><circle r="9.4" fill="none" stroke="#000" stroke-opacity="0.78" stroke-width="1.3"/><path d="M-2.3 -4.9L6 0L-2.3 4.9Z" fill="#000" fill-opacity="0.78"/></svg>
<div class="bx num" style="left:1344px;top:437.58px;width:73.6px;height:20.1px;">4</div>
<div class="bx " style="left:1424.4px;top:437.58px;width:33.4px;height:20.1px;">S</div>
<div class="bx " style="left:1464.8px;top:437.58px;width:33.2px;height:20.1px;"></div>
<svg width="14" height="14" viewBox="-7 -7 14 14" style="left:1474.4px;top:440.63px"><circle r="5.7" fill="#12131c"/><path d="M1.95 -4.4V2" stroke="#edeef0" stroke-width="1.5"/><ellipse cx="-.2" cy="2" rx="2.7" ry="1.7" transform="rotate(-18 -.2 2)" fill="#edeef0"/></svg>
<i style="left:1505px;top:437.48px;width:4.1px;height:1.7px;background:#1e2130"></i>
<i style="left:1505px;top:440.88px;width:4.1px;height:16.9px;background:#1e2130"></i>
<i style="left:1511.5px;top:437.48px;width:4.3px;height:1.7px;background:#1e2130"></i>
<i style="left:1511.5px;top:440.88px;width:4.3px;height:16.9px;background:#1e2130"></i>
<div class="nm" style="left:1033.2px;top:464.26px;width:182.3px;height:27.8px;"><span>Mello</span></div>
<svg width="22" height="22" viewBox="-11 -11 22 22" style="left:1037.4px;top:467.16px"><circle r="9.4" fill="none" stroke="#000" stroke-opacity="0.78" stroke-width="1.3"/><path d="M-2.3 -4.9L6 0L-2.3 4.9Z" fill="#000" fill-opacity="0.78"/></svg>
<div class="bx num" style="left:1344px;top:468.16px;width:73.6px;height:20.1px;">5</div>
<div class="bx " style="left:1424.4px;top:468.16px;width:33.4px;height:20.1px;">S</div>
<div class="bx " style="left:1464.8px;top:468.16px;width:33.2px;height:20.1px;"></div>
<svg width="14" height="14" viewBox="-7 -7 14 14" style="left:1474.4px;top:471.21px"><circle r="5.7" fill="#12131c"/><path d="M1.95 -4.4V2" stroke="#edeef0" stroke-width="1.5"/><ellipse cx="-.2" cy="2" rx="2.7" ry="1.7" transform="rotate(-18 -.2 2)" fill="#edeef0"/></svg>
<i style="left:1505px;top:468.06px;width:4.1px;height:1.7px;background:#1e2130"></i>
<i style="left:1505px;top:471.46px;width:4.1px;height:16.9px;background:#1e2130"></i>
<i style="left:1511.5px;top:468.06px;width:4.3px;height:1.7px;background:#1e2130"></i>
<i style="left:1511.5px;top:471.46px;width:4.3px;height:16.9px;background:#1e2130"></i>
<div class="nm" style="left:1033.2px;top:494.84px;width:182.3px;height:27.8px;"><span>Rose Bass</span></div>
<svg width="22" height="22" viewBox="-11 -11 22 22" style="left:1037.4px;top:497.74px"><circle r="9.4" fill="none" stroke="#000" stroke-opacity="0.78" stroke-width="1.3"/><path d="M-2.3 -4.9L6 0L-2.3 4.9Z" fill="#000" fill-opacity="0.78"/></svg>
<div class="bx num" style="left:1344px;top:498.74px;width:73.6px;height:20.1px;">6</div>
<div class="bx " style="left:1424.4px;top:498.74px;width:33.4px;height:20.1px;">S</div>
<div class="bx " style="left:1464.8px;top:498.74px;width:33.2px;height:20.1px;"></div>
<svg width="14" height="14" viewBox="-7 -7 14 14" style="left:1474.4px;top:501.79px"><circle r="5.7" fill="#12131c"/><path d="M1.95 -4.4V2" stroke="#edeef0" stroke-width="1.5"/><ellipse cx="-.2" cy="2" rx="2.7" ry="1.7" transform="rotate(-18 -.2 2)" fill="#edeef0"/></svg>
<i style="left:1505px;top:498.64px;width:4.1px;height:1.7px;background:#1e2130"></i>
<i style="left:1505px;top:502.04px;width:4.1px;height:16.9px;background:#1e2130"></i>
<i style="left:1511.5px;top:498.64px;width:4.3px;height:1.7px;background:#1e2130"></i>
<i style="left:1511.5px;top:502.04px;width:4.3px;height:16.9px;background:#1e2130"></i>
<div class="nm" style="left:1033.2px;top:525.42px;width:182.3px;height:27.8px;"><span>Sub Sub Bass</span></div>
<svg width="22" height="22" viewBox="-11 -11 22 22" style="left:1037.4px;top:528.32px"><circle r="9.4" fill="none" stroke="#000" stroke-opacity="0.78" stroke-width="1.3"/><path d="M-2.3 -4.9L6 0L-2.3 4.9Z" fill="#000" fill-opacity="0.78"/></svg>
<div class="bx num" style="left:1344px;top:529.32px;width:73.6px;height:20.1px;">7</div>
<div class="bx " style="left:1424.4px;top:529.32px;width:33.4px;height:20.1px;">S</div>
<div class="bx " style="left:1464.8px;top:529.32px;width:33.2px;height:20.1px;"></div>
<svg width="14" height="14" viewBox="-7 -7 14 14" style="left:1474.4px;top:532.37px"><circle r="5.7" fill="#12131c"/><path d="M1.95 -4.4V2" stroke="#edeef0" stroke-width="1.5"/><ellipse cx="-.2" cy="2" rx="2.7" ry="1.7" transform="rotate(-18 -.2 2)" fill="#edeef0"/></svg>
<i style="left:1505px;top:529.22px;width:4.1px;height:1.7px;background:#1e2130"></i>
<i style="left:1505px;top:532.62px;width:4.1px;height:16.9px;background:#1e2130"></i>
<i style="left:1511.5px;top:529.22px;width:4.3px;height:1.7px;background:#1e2130"></i>
<i style="left:1511.5px;top:532.62px;width:4.3px;height:16.9px;background:#1e2130"></i>
<div class="nm" style="left:1033.2px;top:556px;width:182.3px;height:27.8px;"><span>Guit Layter</span></div>
<svg width="22" height="22" viewBox="-11 -11 22 22" style="left:1037.4px;top:558.9px"><circle r="9.4" fill="none" stroke="#000" stroke-opacity="0.78" stroke-width="1.3"/><path d="M-2.3 -4.9L6 0L-2.3 4.9Z" fill="#000" fill-opacity="0.78"/></svg>
<div class="bx num" style="left:1344px;top:559.9px;width:73.6px;height:20.1px;">8</div>
<div class="bx " style="left:1424.4px;top:559.9px;width:33.4px;height:20.1px;">S</div>
<div class="bx " style="left:1464.8px;top:559.9px;width:33.2px;height:20.1px;"></div>
<svg width="14" height="14" viewBox="-7 -7 14 14" style="left:1474.4px;top:562.95px"><circle r="5.7" fill="#12131c"/><path d="M1.95 -4.4V2" stroke="#edeef0" stroke-width="1.5"/><ellipse cx="-.2" cy="2" rx="2.7" ry="1.7" transform="rotate(-18 -.2 2)" fill="#edeef0"/></svg>
<i style="left:1505px;top:559.8px;width:4.1px;height:1.7px;background:#1e2130"></i>
<i style="left:1505px;top:563.2px;width:4.1px;height:16.9px;background:#1e2130"></i>
<i style="left:1511.5px;top:559.8px;width:4.3px;height:1.7px;background:#1e2130"></i>
<i style="left:1511.5px;top:563.2px;width:4.3px;height:16.9px;background:#1e2130"></i>
<div class="nm" style="left:1033.2px;top:586.58px;width:182.3px;height:27.8px;"><span>Transform Seed</span></div>
<svg width="22" height="22" viewBox="-11 -11 22 22" style="left:1037.4px;top:589.48px"><circle r="9.4" fill="none" stroke="#000" stroke-opacity="0.78" stroke-width="1.3"/><path d="M-2.3 -4.9L6 0L-2.3 4.9Z" fill="#000" fill-opacity="0.78"/></svg>
<div class="bx num" style="left:1344px;top:590.48px;width:73.6px;height:20.1px;">9</div>
<div class="bx " style="left:1424.4px;top:590.48px;width:33.4px;height:20.1px;">S</div>
<div class="bx " style="left:1464.8px;top:590.48px;width:33.2px;height:20.1px;"></div>
<svg width="14" height="14" viewBox="-7 -7 14 14" style="left:1474.4px;top:593.53px"><circle r="5.7" fill="#12131c"/><path d="M1.95 -4.4V2" stroke="#edeef0" stroke-width="1.5"/><ellipse cx="-.2" cy="2" rx="2.7" ry="1.7" transform="rotate(-18 -.2 2)" fill="#edeef0"/></svg>
<i style="left:1505px;top:590.38px;width:4.1px;height:1.7px;background:#1e2130"></i>
<i style="left:1505px;top:593.78px;width:4.1px;height:16.9px;background:#1e2130"></i>
<i style="left:1511.5px;top:590.38px;width:4.3px;height:1.7px;background:#1e2130"></i>
<i style="left:1511.5px;top:593.78px;width:4.3px;height:16.9px;background:#1e2130"></i>
<div class="nm" style="left:1033.2px;top:617.16px;width:182.3px;height:27.8px;"><span>Vacuum</span></div>
<svg width="22" height="22" viewBox="-11 -11 22 22" style="left:1037.4px;top:620.06px"><circle r="9.4" fill="none" stroke="#000" stroke-opacity="0.78" stroke-width="1.3"/><path d="M-2.3 -4.9L6 0L-2.3 4.9Z" fill="#000" fill-opacity="0.78"/></svg>
<div class="bx num" style="left:1344px;top:621.06px;width:73.6px;height:20.1px;">10</div>
<div class="bx " style="left:1424.4px;top:621.06px;width:33.4px;height:20.1px;">S</div>
<div class="bx " style="left:1464.8px;top:621.06px;width:33.2px;height:20.1px;"></div>
<svg width="14" height="14" viewBox="-7 -7 14 14" style="left:1474.4px;top:624.11px"><circle r="5.7" fill="#12131c"/><path d="M1.95 -4.4V2" stroke="#edeef0" stroke-width="1.5"/><ellipse cx="-.2" cy="2" rx="2.7" ry="1.7" transform="rotate(-18 -.2 2)" fill="#edeef0"/></svg>
<i style="left:1505px;top:620.96px;width:4.1px;height:1.7px;background:#1e2130"></i>
<i style="left:1505px;top:624.36px;width:4.1px;height:16.9px;background:#1e2130"></i>
<i style="left:1511.5px;top:620.96px;width:4.3px;height:1.7px;background:#1e2130"></i>
<i style="left:1511.5px;top:624.36px;width:4.3px;height:16.9px;background:#1e2130"></i>
<div class="nm" style="left:1033.2px;top:647.74px;width:182.3px;height:27.8px;"><span>Vocal Main</span></div>
<svg width="22" height="22" viewBox="-11 -11 22 22" style="left:1037.4px;top:650.64px"><circle r="9.4" fill="none" stroke="#000" stroke-opacity="0.78" stroke-width="1.3"/><path d="M-2.3 -4.9L6 0L-2.3 4.9Z" fill="#000" fill-opacity="0.78"/></svg>
<div class="bx num" style="left:1344px;top:651.64px;width:73.6px;height:20.1px;">11</div>
<div class="bx " style="left:1424.4px;top:651.64px;width:33.4px;height:20.1px;">S</div>
<div class="bx " style="left:1464.8px;top:651.64px;width:33.2px;height:20.1px;"></div>
<i style="left:1476px;top:656.29px;width:10.8px;height:10.8px;border-radius:50%;background:#868a98;"></i>
<i style="left:1505px;top:651.54px;width:4.1px;height:1.7px;background:#1e2130"></i>
<i style="left:1505px;top:654.94px;width:4.1px;height:16.9px;background:#1e2130"></i>
<i style="left:1511.5px;top:651.54px;width:4.3px;height:1.7px;background:#1e2130"></i>
<i style="left:1511.5px;top:654.94px;width:4.3px;height:16.9px;background:#1e2130"></i>
<div class="nm" style="left:1033.2px;top:678.32px;width:182.3px;height:27.8px;"><span>Vocal Harmony</span></div>
<svg width="22" height="22" viewBox="-11 -11 22 22" style="left:1037.4px;top:681.22px"><circle r="9.4" fill="none" stroke="#000" stroke-opacity="0.78" stroke-width="1.3"/><path d="M-2.3 -4.9L6 0L-2.3 4.9Z" fill="#000" fill-opacity="0.78"/></svg>
<div class="bx num" style="left:1344px;top:682.22px;width:73.6px;height:20.1px;">12</div>
<div class="bx " style="left:1424.4px;top:682.22px;width:33.4px;height:20.1px;">S</div>
<div class="bx " style="left:1464.8px;top:682.22px;width:33.2px;height:20.1px;"></div>
<i style="left:1476px;top:686.87px;width:10.8px;height:10.8px;border-radius:50%;background:#868a98;"></i>
<i style="left:1505px;top:682.12px;width:4.1px;height:1.7px;background:#1e2130"></i>
<i style="left:1505px;top:685.52px;width:4.1px;height:16.9px;background:#1e2130"></i>
<i style="left:1511.5px;top:682.12px;width:4.3px;height:1.7px;background:#1e2130"></i>
<i style="left:1511.5px;top:685.52px;width:4.3px;height:16.9px;background:#1e2130"></i>
<div class="nm" style="left:1033.2px;top:708.9px;width:182.3px;height:27.8px;"><span>Vocal Hum</span></div>
<svg width="22" height="22" viewBox="-11 -11 22 22" style="left:1037.4px;top:711.8px"><circle r="9.4" fill="none" stroke="#000" stroke-opacity="0.78" stroke-width="1.3"/><path d="M-2.3 -4.9L6 0L-2.3 4.9Z" fill="#000" fill-opacity="0.78"/></svg>
<div class="bx num" style="left:1344px;top:712.8px;width:73.6px;height:20.1px;">13</div>
<div class="bx " style="left:1424.4px;top:712.8px;width:33.4px;height:20.1px;">S</div>
<div class="bx " style="left:1464.8px;top:712.8px;width:33.2px;height:20.1px;"></div>
<i style="left:1476px;top:717.45px;width:10.8px;height:10.8px;border-radius:50%;background:#868a98;"></i>
<i style="left:1505px;top:712.7px;width:4.1px;height:1.7px;background:#1e2130"></i>
<i style="left:1505px;top:716.1px;width:4.1px;height:16.9px;background:#1e2130"></i>
<i style="left:1511.5px;top:712.7px;width:4.3px;height:1.7px;background:#1e2130"></i>
<i style="left:1511.5px;top:716.1px;width:4.3px;height:16.9px;background:#1e2130"></i>
<div class="nm" style="left:1033.2px;top:739.48px;width:182.3px;height:27.8px;"><span>Vocal Adlib</span></div>
<svg width="22" height="22" viewBox="-11 -11 22 22" style="left:1037.4px;top:742.38px"><circle r="9.4" fill="none" stroke="#000" stroke-opacity="0.78" stroke-width="1.3"/><path d="M-2.3 -4.9L6 0L-2.3 4.9Z" fill="#000" fill-opacity="0.78"/></svg>
<div class="bx num" style="left:1344px;top:743.38px;width:73.6px;height:20.1px;">14</div>
<div class="bx " style="left:1424.4px;top:743.38px;width:33.4px;height:20.1px;">S</div>
<div class="bx " style="left:1464.8px;top:743.38px;width:33.2px;height:20.1px;"></div>
<i style="left:1476px;top:748.03px;width:10.8px;height:10.8px;border-radius:50%;background:#868a98;"></i>
<i style="left:1505px;top:743.28px;width:4.1px;height:1.7px;background:#1e2130"></i>
<i style="left:1505px;top:746.68px;width:4.1px;height:16.9px;background:#1e2130"></i>
<i style="left:1511.5px;top:743.28px;width:4.3px;height:1.7px;background:#1e2130"></i>
<i style="left:1511.5px;top:746.68px;width:4.3px;height:16.9px;background:#1e2130"></i>
<div class="nm" style="left:1033.2px;top:770.06px;width:182.3px;height:27.8px;"><span>Rainstorm</span></div>
<svg width="22" height="22" viewBox="-11 -11 22 22" style="left:1037.4px;top:772.96px"><circle r="9.4" fill="none" stroke="#000" stroke-opacity="0.78" stroke-width="1.3"/><path d="M-2.3 -4.9L6 0L-2.3 4.9Z" fill="#000" fill-opacity="0.78"/></svg>
<div class="bx num" style="left:1344px;top:773.96px;width:73.6px;height:20.1px;">15</div>
<div class="bx " style="left:1424.4px;top:773.96px;width:33.4px;height:20.1px;">S</div>
<div class="bx " style="left:1464.8px;top:773.96px;width:33.2px;height:20.1px;"></div>
<svg width="14" height="14" viewBox="-7 -7 14 14" style="left:1474.4px;top:777.01px"><circle r="5.7" fill="#12131c"/><path d="M1.95 -4.4V2" stroke="#edeef0" stroke-width="1.5"/><ellipse cx="-.2" cy="2" rx="2.7" ry="1.7" transform="rotate(-18 -.2 2)" fill="#edeef0"/></svg>
<i style="left:1505px;top:773.86px;width:4.1px;height:1.7px;background:#1e2130"></i>
<i style="left:1505px;top:777.26px;width:4.1px;height:16.9px;background:#1e2130"></i>
<i style="left:1511.5px;top:773.86px;width:4.3px;height:1.7px;background:#1e2130"></i>
<i style="left:1511.5px;top:777.26px;width:4.3px;height:16.9px;background:#1e2130"></i>
<div class="nm" style="left:1033.2px;top:261.8px;width:182.3px;height:138.7px;line-height:28.6px"><span>Strum</span></div>
<svg width="22" height="22" viewBox="-11 -11 22 22" style="left:1037.4px;top:264.3px"><circle r="9.4" fill="none" stroke="#000" stroke-opacity="0.78" stroke-width="1.3"/><path d="M-4.9 -2.4H4.9L0 5.6Z" fill="#000" fill-opacity="0.78"/></svg>
<div class="bx sel" style="left:1221.8px;top:265.2px;width:111.9px;height:20.1px;"><span style="margin-left:0px;display:inline-block;overflow:hidden;max-width:95px">All Ins</span></div>
<svg width="12" height="10" style="left:1320.4px;top:271.6px"><path d="M0 0H9.4L4.7 7.4Z" fill="#15161f"/></svg>
<div class="bx sel" style="left:1221.8px;top:292.7px;width:111.9px;height:20.1px;"><span style="margin-left:16px;display:inline-block;overflow:hidden;max-width:77.5px">All Channels</span></div>
<svg width="12" height="10" style="left:1320.4px;top:299.1px"><path d="M0 0H9.4L4.7 7.4Z" fill="#15161f"/></svg>
<div class="bx sel" style="left:1221.8px;top:347.5px;width:111.9px;height:20.1px;"><span style="margin-left:0px;display:inline-block;overflow:hidden;max-width:95px">Main</span></div>
<svg width="12" height="10" style="left:1320.4px;top:353.9px"><path d="M0 0H9.4L4.7 7.4Z" fill="#15161f"/></svg>
<svg width="6" height="14" viewBox="-3 -7 6 14" style="left:1225.6px;top:295.8px"><path d="M0 -4.6V4.6" stroke="#15161f" stroke-width="1.2"/><circle cy="-4.7" r="1.9" fill="#15161f"/><circle cy="0" r="1.9" fill="#15161f"/><circle cy="4.7" r="1.9" fill="#15161f"/></svg>
<div class="bx " style="left:1221.8px;top:320.1px;width:26.9px;height:20px;">In</div>
<div class="bx " style="left:1254.1px;top:320.1px;width:42.6px;height:20px;">Auto</div>
<div class="bx " style="left:1302.1px;top:320.1px;width:31.6px;height:20px;">Off</div>
<div class="bx num" style="left:1344px;top:265.2px;width:73.6px;height:20.1px;">2</div>
<div class="bx " style="left:1424.4px;top:265.2px;width:33.4px;height:20.1px;">S</div>
<div class="bx " style="left:1464.8px;top:265.2px;width:33.2px;height:20.1px;"></div>
<svg width="14" height="14" viewBox="-7 -7 14 14" style="left:1474.4px;top:268.25px"><circle r="5.7" fill="#12131c"/><path d="M1.95 -4.4V2" stroke="#edeef0" stroke-width="1.5"/><ellipse cx="-.2" cy="2" rx="2.7" ry="1.7" transform="rotate(-18 -.2 2)" fill="#edeef0"/></svg>
<div class="bx " style="left:1344px;top:292.7px;width:73.6px;height:20.1px;">-6.3</div>
<div class="bx " style="left:1424.4px;top:292.7px;width:73.6px;height:20.1px;">C</div>
<div class="bx inf" style="left:1344px;top:320.1px;width:47.8px;height:20px;"><span style="margin-left:8px;margin-top:-2px">-∞</span></div>
<div class="bx inf" style="left:1397px;top:320.1px;width:47.8px;height:20px;"><span style="margin-top:-2px">-∞</span></div>
<i style="left:1344.3px;top:320.5px;width:8.6px;height:8.6px;border-radius:50%;background:#f4555c;border:1px solid #3a2030;"></i>
<div style="left:1505.2px;top:265.2px;width:4.1px;height:11.8px;background:#1e2130"></div>
<div style="left:1505.2px;top:278.4px;width:4.1px;height:118.4px;background:#1e2130"></div>
<div style="left:1511.5px;top:265.2px;width:4.3px;height:11.8px;background:#1e2130"></div>
<div style="left:1511.5px;top:278.4px;width:4.3px;height:118.4px;background:#1e2130"></div>
<div class="nm" style="left:1033.2px;top:980.8px;width:182.3px;height:27.5px;color:#1d1e26"><span>A<span style="margin-left:5.5px">Reverb</span></span></div>
<svg width="22" height="22" viewBox="-11 -11 22 22" style="left:1037.4px;top:983.55px"><circle r="9.4" fill="none" stroke="#000" stroke-opacity="0.78" stroke-width="1.3"/><path d="M-2.3 -4.9L6 0L-2.3 4.9Z" fill="#000" fill-opacity="0.78"/></svg>
<div class="bx num" style="left:1344px;top:984.6px;width:73.6px;height:20px;">A</div>
<div class="bx " style="left:1424.4px;top:984.6px;width:26.6px;height:20px;">S</div>
<div class="bx " style="left:1458.2px;top:984.6px;width:39.6px;height:20px;">Post</div>
<i style="left:1505px;top:984.5px;width:4.1px;height:1.7px;background:#1e2130"></i>
<i style="left:1505px;top:987.9px;width:4.1px;height:16.8px;background:#1e2130"></i>
<i style="left:1511.5px;top:984.5px;width:4.3px;height:1.7px;background:#1e2130"></i>
<i style="left:1511.5px;top:987.9px;width:4.3px;height:16.8px;background:#1e2130"></i>
<div class="nm" style="left:1033.2px;top:1011.2px;width:182.3px;height:27.3px;color:#1d1e26"><span>B<span style="margin-left:5.5px">Delay</span></span></div>
<svg width="22" height="22" viewBox="-11 -11 22 22" style="left:1037.4px;top:1013.85px"><circle r="9.4" fill="none" stroke="#000" stroke-opacity="0.78" stroke-width="1.3"/><path d="M-2.3 -4.9L6 0L-2.3 4.9Z" fill="#000" fill-opacity="0.78"/></svg>
<div class="bx num" style="left:1344px;top:1015px;width:73.6px;height:20px;">B</div>
<div class="bx " style="left:1424.4px;top:1015px;width:26.6px;height:20px;">S</div>
<div class="bx " style="left:1458.2px;top:1015px;width:39.6px;height:20px;">Post</div>
<i style="left:1505px;top:1014.9px;width:4.1px;height:1.7px;background:#1e2130"></i>
<i style="left:1505px;top:1018.3px;width:4.1px;height:16.8px;background:#1e2130"></i>
<i style="left:1511.5px;top:1014.9px;width:4.3px;height:1.7px;background:#1e2130"></i>
<i style="left:1511.5px;top:1018.3px;width:4.3px;height:16.8px;background:#1e2130"></i>
<div class="nm" style="left:1033.2px;top:1041.5px;width:182.3px;height:28px;color:#e4e4e4"><span style="margin-left:3px">Main</span></div>
<svg width="22" height="22" viewBox="-11 -11 22 22" style="left:1037.4px;top:1044.5px"><circle r="9.4" fill="none" stroke="#fff" stroke-opacity="0.88" stroke-width="1.3"/><path d="M-2.3 -4.9L6 0L-2.3 4.9Z" fill="#fff" fill-opacity="0.88"/></svg>
<div class="bx sel" style="left:1221.8px;top:1045.5px;width:111.9px;height:20px;"><span style="margin-left:15px">1/2</span></div>
<svg width="12" height="10" style="left:1320.4px;top:1051.9px"><path d="M0 0H9.4L4.7 7.4Z" fill="#15161f"/></svg>
<div style="left:1225.4px;top:1048.7px;width:2.4px;height:1.6px;background:#15161f"></div>
<div style="left:1225.4px;top:1051.9px;width:2.4px;height:10.2px;background:#15161f"></div>
<div style="left:1229.6px;top:1048.7px;width:2.4px;height:1.6px;background:#15161f"></div>
<div style="left:1229.6px;top:1051.9px;width:2.4px;height:10.2px;background:#15161f"></div>
<div class="bx " style="left:1344px;top:1045.5px;width:73.6px;height:20px;">0</div>
<div class="bx " style="left:1424.4px;top:1045.5px;width:73.6px;height:20px;">0</div>
<i style="left:1505px;top:1045.2px;width:4.1px;height:1.7px;background:#1e2130"></i>
<i style="left:1505px;top:1048.6px;width:4.1px;height:17px;background:#1e2130"></i>
<i style="left:1511.5px;top:1045.2px;width:4.3px;height:1.7px;background:#1e2130"></i>
<i style="left:1511.5px;top:1048.6px;width:4.3px;height:17px;background:#1e2130"></i>
</div>
<div id="toolbar" style="left:0;top:0;width:1523px;height:1110px"><svg width="1523" height="1110" style="left:0;top:0"><rect x="1034.58" y="1080.08" width="21.25" height="18.15" fill="#ffba16" stroke="#50566c" stroke-width="1.35"/><rect x="1063.27" y="1080.08" width="53.85" height="18.15" fill="#f5f5f7"/><rect x="1063.27" y="1080.08" width="16.52" height="18.15" fill="#03cde0"/><rect x="1063.27" y="1080.08" width="53.85" height="18.15" fill="none" stroke="#50566c" stroke-width="1.35"/><rect x="1161.58" y="1080.08" width="21.25" height="18.15" fill="#edeef0" stroke="#50566c" stroke-width="1.35"/><rect x="1189.97" y="1080.08" width="22.25" height="18.15" fill="#edeef0" stroke="#50566c" stroke-width="1.35"/></svg></div>
<div id="timeruler" style="left:0;top:1072.6px;width:1523px;height:37px">
<i style="left:22.3px;top:.4px;width:1.3px;height:3.6px;background:#7d8291"></i>
<i style="left:58.53px;top:.4px;width:1.3px;height:3.6px;background:#7d8291"></i>
<i style="left:94.75px;top:.4px;width:1.3px;height:3.6px;background:#7d8291"></i>
<i style="left:130.98px;top:.4px;width:1.3px;height:3.6px;background:#7d8291"></i>
<i style="left:167.2px;top:.4px;width:1.2px;height:12px;background:#6a6f82"></i><i style="left:167.8px;top:11.3px;width:3px;height:1.2px;background:#6a6f82"></i>
<i style="left:203.42px;top:.4px;width:1.3px;height:3.6px;background:#7d8291"></i>
<i style="left:239.65px;top:.4px;width:1.3px;height:3.6px;background:#7d8291"></i>
<i style="left:275.87px;top:.4px;width:1.3px;height:3.6px;background:#7d8291"></i>
<i style="left:312.1px;top:.4px;width:1.3px;height:3.6px;background:#7d8291"></i>
<i style="left:348.32px;top:.4px;width:1.2px;height:12px;background:#6a6f82"></i><i style="left:348.92px;top:11.3px;width:3px;height:1.2px;background:#6a6f82"></i>
<i style="left:384.54px;top:.4px;width:1.3px;height:3.6px;background:#7d8291"></i>
<i style="left:420.77px;top:.4px;width:1.3px;height:3.6px;background:#7d8291"></i>
<i style="left:456.99px;top:.4px;width:1.3px;height:3.6px;background:#7d8291"></i>
<i style="left:493.22px;top:.4px;width:1.3px;height:3.6px;background:#7d8291"></i>
<i style="left:529.44px;top:.4px;width:1.2px;height:12px;background:#6a6f82"></i><i style="left:530.04px;top:11.3px;width:3px;height:1.2px;background:#6a6f82"></i>
<i style="left:565.66px;top:.4px;width:1.3px;height:3.6px;background:#7d8291"></i>
<i style="left:601.89px;top:.4px;width:1.3px;height:3.6px;background:#7d8291"></i>
<i style="left:638.11px;top:.4px;width:1.3px;height:3.6px;background:#7d8291"></i>
<i style="left:674.34px;top:.4px;width:1.3px;height:3.6px;background:#7d8291"></i>
<i style="left:710.56px;top:.4px;width:1.2px;height:12px;background:#6a6f82"></i><i style="left:711.16px;top:11.3px;width:3px;height:1.2px;background:#6a6f82"></i>
<i style="left:746.78px;top:.4px;width:1.3px;height:3.6px;background:#7d8291"></i>
<i style="left:783.01px;top:.4px;width:1.3px;height:3.6px;background:#7d8291"></i>
<i style="left:819.23px;top:.4px;width:1.3px;height:3.6px;background:#7d8291"></i>
<i style="left:855.46px;top:.4px;width:1.3px;height:3.6px;background:#7d8291"></i>
<i style="left:891.68px;top:.4px;width:1.2px;height:12px;background:#6a6f82"></i><i style="left:892.28px;top:11.3px;width:3px;height:1.2px;background:#6a6f82"></i>
<i style="left:927.9px;top:.4px;width:1.3px;height:3.6px;background:#7d8291"></i>
<i style="left:964.13px;top:.4px;width:1.3px;height:3.6px;background:#7d8291"></i>
<i style="left:1000.35px;top:.4px;width:1.3px;height:3.6px;background:#7d8291"></i>
<span class="t rn" style="left:172.4px;top:11.3px">1:00</span>
<span class="t rn" style="left:353.52px;top:11.3px">1:10</span>
<span class="t rn" style="left:534.64px;top:11.3px">1:20</span>
<span class="t rn" style="left:715.76px;top:11.3px">1:30</span>
<span class="t rn" style="left:896.88px;top:11.3px">1:40</span>
<span class="t rn" style="left:-8.3px;top:11.3px">0:50</span>
<i style="left:0;top:34.2px;width:1522.5px;height:2.8px;background:#868a98"></i>
</div>
<div class="bx " style="left:1033.9px;top:1079.4px;width:22.6px;height:19.5px;"></div>
<svg width="30" height="30" viewBox="1030 1075 30 30" style="left:1030px;top:1075px"><path d="M1038.8 1086.9v4.4M1042.1 1084.1v10M1045.4 1081.9v14.4M1048.8 1084.1v10M1052.1 1086.9v4.4" stroke="#2a2410" stroke-width="1.3" fill="none"/></svg>
<div class="bx " style="left:1062.6px;top:1079.4px;width:55.2px;height:19.5px;">1.00x</div>
<div class="bx " style="left:1160.9px;top:1079.4px;width:22.6px;height:19.5px;">H</div>
<div class="bx " style="left:1189.3px;top:1079.4px;width:23.6px;height:19.5px;">W</div>
<div id="mixer" style="left:0;top:0;width:1523px;height:1411px">
<svg width="1523" height="1411" style="left:0;top:0"><rect x="-5" y="1109.5" width="949.6" height="301" fill="#868a98"/><rect x="1076.9" y="1109.5" width="445.6" height="301" fill="#868a98" rx="6"/><rect x="1076.9" y="1109.5" width="445.6" height="290.5" fill="#868a98"/><rect x="1076.9" y="1109.5" width="423.1" height="301" fill="#868a98"/><rect x="-64.1" y="1110.8" width="119.4" height="27.6" fill="#cd9fdc"/><rect x="-64.1" y="1141.6" width="119.4" height="88.6" fill="#c8cbd4"/><rect x="-64.1" y="1233.2" width="119.4" height="165" fill="#c8cbd4"/><rect x="-64.1" y="1401" width="119.4" height="9.5" fill="#cd9fdc"/><rect x="-46.62" y="1297.38" width="34.65" height="34.55" fill="#ffba16" stroke="#5c5f68" stroke-width="1.35"/><rect x="-46.62" y="1340.58" width="34.65" height="18.75" fill="#edeef0" stroke="#50566c" stroke-width="1.35"/><rect x="-46.62" y="1367.88" width="34.65" height="18.75" fill="#edeef0" stroke="#50566c" stroke-width="1.35"/><rect x="58.1" y="1110.8" width="119.4" height="27.6" fill="#dfb8b2"/><rect x="58.1" y="1141.6" width="119.4" height="88.6" fill="#c8cbd4"/><rect x="58.1" y="1233.2" width="119.4" height="165" fill="#c8cbd4"/><rect x="58.1" y="1401" width="119.4" height="9.5" fill="#dfb8b2"/><rect x="75.58" y="1297.38" width="34.65" height="34.55" fill="#ffba16" stroke="#5c5f68" stroke-width="1.35"/><rect x="75.58" y="1340.58" width="34.65" height="18.75" fill="#edeef0" stroke="#50566c" stroke-width="1.35"/><rect x="75.58" y="1367.88" width="34.65" height="18.75" fill="#edeef0" stroke="#50566c" stroke-width="1.35"/><rect x="180.3" y="1110.8" width="119.4" height="27.6" fill="#d5a73c"/><rect x="180.3" y="1141.6" width="119.4" height="88.6" fill="#c8cbd4"/><rect x="180.3" y="1233.2" width="119.4" height="165" fill="#c8cbd4"/><rect x="180.3" y="1401" width="119.4" height="9.5" fill="#d5a73c"/><rect x="197.78" y="1297.38" width="34.65" height="34.55" fill="#ffba16" stroke="#5c5f68" stroke-width="1.35"/><rect x="197.78" y="1340.58" width="34.65" height="18.75" fill="#edeef0" stroke="#50566c" stroke-width="1.35"/><rect x="197.78" y="1367.88" width="34.65" height="18.75" fill="#edeef0" stroke="#50566c" stroke-width="1.35"/><rect x="302.5" y="1110.8" width="119.4" height="27.6" fill="#faf492"/><rect x="302.5" y="1141.6" width="119.4" height="88.6" fill="#c8cbd4"/><rect x="302.5" y="1233.2" width="119.4" height="165" fill="#c8cbd4"/><rect x="302.5" y="1401" width="119.4" height="9.5" fill="#faf492"/><rect x="319.98" y="1297.38" width="34.65" height="34.55" fill="#ffba16" stroke="#5c5f68" stroke-width="1.35"/><rect x="319.98" y="1340.58" width="34.65" height="18.75" fill="#edeef0" stroke="#50566c" stroke-width="1.35"/><rect x="319.98" y="1367.88" width="34.65" height="18.75" fill="#edeef0" stroke="#50566c" stroke-width="1.35"/><rect x="424.7" y="1110.8" width="119.4" height="27.6" fill="#faf492"/><rect x="424.7" y="1141.6" width="119.4" height="88.6" fill="#c8cbd4"/><rect x="424.7" y="1233.2" width="119.4" height="165" fill="#c8cbd4"/><rect x="424.7" y="1401" width="119.4" height="9.5" fill="#faf492"/><rect x="442.18" y="1297.38" width="34.65" height="34.55" fill="#ffba16" stroke="#5c5f68" stroke-width="1.35"/><rect x="442.18" y="1340.58" width="34.65" height="18.75" fill="#edeef0" stroke="#50566c" stroke-width="1.35"/><rect x="442.18" y="1367.88" width="34.65" height="18.75" fill="#edeef0" stroke="#50566c" stroke-width="1.35"/><rect x="546.9" y="1110.8" width="119.4" height="27.6" fill="#faf492"/><rect x="546.9" y="1141.6" width="119.4" height="88.6" fill="#c8cbd4"/><rect x="546.9" y="1233.2" width="119.4" height="165" fill="#c8cbd4"/><rect x="546.9" y="1401" width="119.4" height="9.5" fill="#faf492"/><rect x="564.37" y="1297.38" width="34.65" height="34.55" fill="#ffba16" stroke="#5c5f68" stroke-width="1.35"/><rect x="564.37" y="1340.58" width="34.65" height="18.75" fill="#edeef0" stroke="#50566c" stroke-width="1.35"/><rect x="564.37" y="1367.88" width="34.65" height="18.75" fill="#edeef0" stroke="#50566c" stroke-width="1.35"/><rect x="669.1" y="1110.8" width="119.4" height="27.6" fill="#faf492"/><rect x="669.1" y="1141.6" width="119.4" height="88.6" fill="#c8cbd4"/><rect x="669.1" y="1233.2" width="119.4" height="165" fill="#c8cbd4"/><rect x="669.1" y="1401" width="119.4" height="9.5" fill="#faf492"/><rect x="686.57" y="1297.38" width="34.65" height="34.55" fill="#ffba16" stroke="#5c5f68" stroke-width="1.35"/><rect x="686.57" y="1340.58" width="34.65" height="18.75" fill="#edeef0" stroke="#50566c" stroke-width="1.35"/><rect x="686.57" y="1367.88" width="34.65" height="18.75" fill="#edeef0" stroke="#50566c" stroke-width="1.35"/><rect x="791.3" y="1110.8" width="150" height="27.6" fill="#e2ebb6"/><rect x="791.3" y="1141.6" width="150" height="88.6" fill="#c8cbd4"/><rect x="791.3" y="1233.2" width="150" height="165" fill="#c8cbd4"/><rect x="791.3" y="1401" width="150" height="9.5" fill="#e2ebb6"/><rect x="813.48" y="1297.38" width="34.65" height="34.55" fill="#ffba16" stroke="#5c5f68" stroke-width="1.35"/><rect x="813.48" y="1340.58" width="34.65" height="18.75" fill="#edeef0" stroke="#50566c" stroke-width="1.35"/><rect x="813.48" y="1367.88" width="34.65" height="18.75" fill="#edeef0" stroke="#50566c" stroke-width="1.35"/><rect x="1081.3" y="1110.8" width="119.5" height="27.6" fill="#d0d0d0"/><rect x="1081.3" y="1141.6" width="119.5" height="88.6" fill="#c8cbd4"/><rect x="1081.3" y="1233.2" width="119.5" height="165" fill="#c8cbd4"/><rect x="1081.3" y="1401" width="119.5" height="9.5" fill="#d0d0d0"/><rect x="1098.77" y="1297.38" width="34.65" height="34.55" fill="#ffba16" stroke="#5c5f68" stroke-width="1.35"/><rect x="1098.77" y="1340.58" width="34.65" height="18.75" fill="#edeef0" stroke="#50566c" stroke-width="1.35"/><rect x="1203.8" y="1110.8" width="119.5" height="27.6" fill="#a2a2a2"/><rect x="1203.8" y="1141.6" width="119.5" height="88.6" fill="#c8cbd4"/><rect x="1203.8" y="1233.2" width="119.5" height="165" fill="#c8cbd4"/><rect x="1203.8" y="1401" width="119.5" height="9.5" fill="#a2a2a2"/><rect x="1221.27" y="1297.38" width="34.65" height="34.55" fill="#ffba16" stroke="#5c5f68" stroke-width="1.35"/><rect x="1221.27" y="1340.58" width="34.65" height="18.75" fill="#edeef0" stroke="#50566c" stroke-width="1.35"/><rect x="1326.1" y="1110.8" width="196.4" height="27.6" fill="#484848"/><rect x="1326.1" y="1141.6" width="196.4" height="88.6" fill="#c8cbd4"/><rect x="1326.1" y="1233.2" width="196.4" height="165" fill="#c8cbd4"/><path d="M1326.1 1401H1522.5V1404.5A6 6 0 0 1 1516.5 1410.5H1326.1Z" fill="#484848"/><rect x="1378.67" y="1161.88" width="39.75" height="19.15" fill="#ffba16" stroke="#50566c" stroke-width="1.35"/><rect x="1432.97" y="1189.67" width="40.15" height="18.45" fill="#ffba16" stroke="#50566c" stroke-width="1.35"/><rect x="1375.38" y="1313.47" width="38.05" height="18.65" fill="#fcfcfd" stroke="#50566c" stroke-width="1.35"/></svg>
<div class="sh" style="left:-64.1px;top:1110.8px;width:119.4px;height:27.6px;color:#1f2027"><span>Guit Layter</span></div>
<svg width="22" height="22" viewBox="-11 -11 22 22" style="left:30.3px;top:1113.6px"><circle r="9.5" fill="none" stroke="#000" stroke-opacity=".75" stroke-width="1.3"/><path d="M-4.7 -2.3H4.7L0 5Z" fill="#000" fill-opacity=".8"/></svg>
<svg width="48" height="48" viewBox="-24 -24 48 48" style="left:-55.4px;top:1146.2px" fill="none" stroke="#1d2030" stroke-width="3"><path d="M-12.6 14.49A19.2 19.2 0 1 1 10.17 16.28"/><path d="M-0.21 0.34L-11.45 18.32"/></svg>
<span class="t kl" style="left:-41.4px;top:1189px">A</span>
<svg width="48" height="48" viewBox="-24 -24 48 48" style="left:-1.7px;top:1172.9px" fill="none" stroke="#1d2030" stroke-width="3"><path d="M-12.6 14.49A19.2 19.2 0 1 1 10.17 16.28"/><path d="M-0.21 0.34L-11.45 18.32"/></svg>
<span class="t kl" style="left:12.3px;top:1215.7px">B</span>
<span class="t" style="left:-1.5px;top:1158.6px">Sends</span>
<svg width="48" height="56" viewBox="-24 -32 48 56" style="left:-53.1px;top:1241.1px" fill="none" stroke="#1d2030" stroke-width="2.9"><path d="M4.05 -19.07A19.5 19.5 0 0 1 10.9 16.17"/><path d="M-10.9 16.17A19.5 19.5 0 0 1 -4.05 -19.07"/><path d="M0 -20.4V-.6" stroke-linecap="round" stroke-width="3"/><path d="M-6 -29.8H6L0 -23.3Z" fill="#2a2d3c" stroke="none"/></svg>
<div class="bx big" style="left:-47.3px;top:1296.7px;width:36px;height:35.9px;">8</div>
<div class="bx " style="left:-47.3px;top:1339.9px;width:36px;height:20.1px;">S</div>
<div class="bx " style="left:-47.3px;top:1367.2px;width:36px;height:20.1px;"></div>
<svg width="14" height="14" viewBox="-7 -7 14 14" style="left:-36.3px;top:1370.3px"><circle r="5.7" fill="#12131c"/><path d="M1.95 -4.4V2" stroke="#edeef0" stroke-width="1.5"/><ellipse cx="-.2" cy="2" rx="2.7" ry="1.7" transform="rotate(-18 -.2 2)" fill="#edeef0"/></svg>
<i style="left:16.7px;top:1244.8px;width:4.6px;height:1.4px;background:#a7abb7"></i>
<i style="left:16.7px;top:1259.2px;width:4.6px;height:1.4px;background:#5d6274"></i>
<i style="left:16.7px;top:1271.9px;width:4.6px;height:1.4px;background:#a7abb7"></i>
<i style="left:16.7px;top:1286.6px;width:4.6px;height:1.4px;background:#5d6274"></i>
<i style="left:16.7px;top:1301.2px;width:4.6px;height:1.4px;background:#a7abb7"></i>
<i style="left:16.7px;top:1314.2px;width:4.6px;height:1.4px;background:#5d6274"></i>
<i style="left:16.7px;top:1328.5px;width:4.6px;height:1.4px;background:#a7abb7"></i>
<i style="left:16.7px;top:1341.3px;width:4.6px;height:1.4px;background:#5d6274"></i>
<i style="left:16.7px;top:1350.8px;width:4.6px;height:1.4px;background:#a7abb7"></i>
<i style="left:16.7px;top:1360.6px;width:4.6px;height:1.4px;background:#5d6274"></i>
<i style="left:16.7px;top:1368.7px;width:4.6px;height:1.4px;background:#a7abb7"></i>
<i style="left:16.7px;top:1376.8px;width:4.6px;height:1.4px;background:#a7abb7"></i>
<i style="left:16.7px;top:1383.1px;width:4.6px;height:1.4px;background:#a7abb7"></i>
<div style="left:24.7px;top:1243.1px;width:20.3px;height:144.2px;background:#252836;border-radius:2.5px"></div>
<div style="left:34.5px;top:1244px;width:1.4px;height:142.6px;background:#555a6e"></div>
<div style="left:25.5px;top:1259.1px;width:8.7px;height:1.6px;background:#d6d8de"></div>
<div style="left:36.2px;top:1259.1px;width:8.1px;height:1.6px;background:#d6d8de"></div>
<svg width="20" height="22" style="left:5.3px;top:1248.9px"><path d="M.4 1.2L17.6 11L.4 20.8Z" fill="#14151f"/></svg>
<div class="sh" style="left:58.1px;top:1110.8px;width:119.4px;height:27.6px;color:#1f2027"><span>Transform Se</span></div>
<svg width="48" height="48" viewBox="-24 -24 48 48" style="left:66.8px;top:1146.2px" fill="none" stroke="#1d2030" stroke-width="3"><path d="M-12.6 14.49A19.2 19.2 0 1 1 10.17 16.28"/><path d="M-0.21 0.34L-11.45 18.32"/></svg>
<span class="t kl" style="left:80.8px;top:1189px">A</span>
<svg width="48" height="48" viewBox="-24 -24 48 48" style="left:120.5px;top:1172.9px" fill="none" stroke="#1d2030" stroke-width="3"><path d="M-12.6 14.49A19.2 19.2 0 1 1 10.17 16.28"/><path d="M-0.21 0.34L-11.45 18.32"/></svg>
<span class="t kl" style="left:134.5px;top:1215.7px">B</span>
<span class="t" style="left:120.7px;top:1158.6px">Sends</span>
<svg width="48" height="56" viewBox="-24 -32 48 56" style="left:69.1px;top:1241.1px" fill="none" stroke="#1d2030" stroke-width="2.9"><path d="M4.05 -19.07A19.5 19.5 0 0 1 10.9 16.17"/><path d="M-10.9 16.17A19.5 19.5 0 0 1 -4.05 -19.07"/><path d="M0 -20.4V-.6" stroke-linecap="round" stroke-width="3"/><path d="M-6 -29.8H6L0 -23.3Z" fill="#2a2d3c" stroke="none"/></svg>
<div class="bx big" style="left:74.9px;top:1296.7px;width:36px;height:35.9px;">9</div>
<div class="bx " style="left:74.9px;top:1339.9px;width:36px;height:20.1px;">S</div>
<div class="bx " style="left:74.9px;top:1367.2px;width:36px;height:20.1px;"></div>
<svg width="14" height="14" viewBox="-7 -7 14 14" style="left:85.9px;top:1370.3px"><circle r="5.7" fill="#12131c"/><path d="M1.95 -4.4V2" stroke="#edeef0" stroke-width="1.5"/><ellipse cx="-.2" cy="2" rx="2.7" ry="1.7" transform="rotate(-18 -.2 2)" fill="#edeef0"/></svg>
<i style="left:138.9px;top:1244.8px;width:4.6px;height:1.4px;background:#a7abb7"></i>
<i style="left:138.9px;top:1259.2px;width:4.6px;height:1.4px;background:#5d6274"></i>
<i style="left:138.9px;top:1271.9px;width:4.6px;height:1.4px;background:#a7abb7"></i>
<i style="left:138.9px;top:1286.6px;width:4.6px;height:1.4px;background:#5d6274"></i>
<i style="left:138.9px;top:1301.2px;width:4.6px;height:1.4px;background:#a7abb7"></i>
<i style="left:138.9px;top:1314.2px;width:4.6px;height:1.4px;background:#5d6274"></i>
<i style="left:138.9px;top:1328.5px;width:4.6px;height:1.4px;background:#a7abb7"></i>
<i style="left:138.9px;top:1341.3px;width:4.6px;height:1.4px;background:#5d6274"></i>
<i style="left:138.9px;top:1350.8px;width:4.6px;height:1.4px;background:#a7abb7"></i>
<i style="left:138.9px;top:1360.6px;width:4.6px;height:1.4px;background:#5d6274"></i>
<i style="left:138.9px;top:1368.7px;width:4.6px;height:1.4px;background:#a7abb7"></i>
<i style="left:138.9px;top:1376.8px;width:4.6px;height:1.4px;background:#a7abb7"></i>
<i style="left:138.9px;top:1383.1px;width:4.6px;height:1.4px;background:#a7abb7"></i>
<div style="left:146.9px;top:1243.1px;width:20.3px;height:144.2px;background:#252836;border-radius:2.5px"></div>
<div style="left:156.7px;top:1244px;width:1.4px;height:142.6px;background:#555a6e"></div>
<div style="left:147.7px;top:1259.1px;width:8.7px;height:1.6px;background:#d6d8de"></div>
<div style="left:158.4px;top:1259.1px;width:8.1px;height:1.6px;background:#d6d8de"></div>
<svg width="20" height="22" style="left:127.5px;top:1282.8px"><path d="M.4 1.2L17.6 11L.4 20.8Z" fill="#14151f"/></svg>
<div class="sh" style="left:180.3px;top:1110.8px;width:119.4px;height:27.6px;color:#1f2027"><span>Vacuum</span></div>
<svg width="22" height="22" viewBox="-11 -11 22 22" style="left:274.7px;top:1113.6px"><circle r="9.5" fill="none" stroke="#000" stroke-opacity=".75" stroke-width="1.3"/><path d="M-4.7 -2.3H4.7L0 5Z" fill="#000" fill-opacity=".8"/></svg>
<svg width="48" height="48" viewBox="-24 -24 48 48" style="left:189px;top:1146.2px" fill="none" stroke="#1d2030" stroke-width="3"><path d="M-12.6 14.49A19.2 19.2 0 1 1 10.17 16.28"/><path d="M-0.21 0.34L-11.45 18.32"/></svg>
<span class="t kl" style="left:203px;top:1189px">A</span>
<svg width="48" height="48" viewBox="-24 -24 48 48" style="left:242.7px;top:1172.9px" fill="none" stroke="#1d2030" stroke-width="3"><path d="M-12.6 14.49A19.2 19.2 0 1 1 10.17 16.28"/><path d="M-0.21 0.34L-11.45 18.32"/></svg>
<span class="t kl" style="left:256.7px;top:1215.7px">B</span>
<span class="t" style="left:242.9px;top:1158.6px">Sends</span>
<svg width="48" height="56" viewBox="-24 -32 48 56" style="left:191.3px;top:1241.1px" fill="none" stroke="#1d2030" stroke-width="2.9"><path d="M4.05 -19.07A19.5 19.5 0 0 1 10.9 16.17"/><path d="M-10.9 16.17A19.5 19.5 0 0 1 -4.05 -19.07"/><path d="M0 -20.4V-.6" stroke-linecap="round" stroke-width="3"/><path d="M-6 -29.8H6L0 -23.3Z" fill="#2a2d3c" stroke="none"/></svg>
<div class="bx big" style="left:197.1px;top:1296.7px;width:36px;height:35.9px;">10</div>
<div class="bx " style="left:197.1px;top:1339.9px;width:36px;height:20.1px;">S</div>
<div class="bx " style="left:197.1px;top:1367.2px;width:36px;height:20.1px;"></div>
<svg width="14" height="14" viewBox="-7 -7 14 14" style="left:208.1px;top:1370.3px"><circle r="5.7" fill="#12131c"/><path d="M1.95 -4.4V2" stroke="#edeef0" stroke-width="1.5"/><ellipse cx="-.2" cy="2" rx="2.7" ry="1.7" transform="rotate(-18 -.2 2)" fill="#edeef0"/></svg>
<i style="left:261.1px;top:1244.8px;width:4.6px;height:1.4px;background:#a7abb7"></i>
<i style="left:261.1px;top:1259.2px;width:4.6px;height:1.4px;background:#5d6274"></i>
<i style="left:261.1px;top:1271.9px;width:4.6px;height:1.4px;background:#a7abb7"></i>
<i style="left:261.1px;top:1286.6px;width:4.6px;height:1.4px;background:#5d6274"></i>
<i style="left:261.1px;top:1301.2px;width:4.6px;height:1.4px;background:#a7abb7"></i>
<i style="left:261.1px;top:1314.2px;width:4.6px;height:1.4px;background:#5d6274"></i>
<i style="left:261.1px;top:1328.5px;width:4.6px;height:1.4px;background:#a7abb7"></i>
<i style="left:261.1px;top:1341.3px;width:4.6px;height:1.4px;background:#5d6274"></i>
<i style="left:261.1px;top:1350.8px;width:4.6px;height:1.4px;background:#a7abb7"></i>
<i style="left:261.1px;top:1360.6px;width:4.6px;height:1.4px;background:#5d6274"></i>
<i style="left:261.1px;top:1368.7px;width:4.6px;height:1.4px;background:#a7abb7"></i>
<i style="left:261.1px;top:1376.8px;width:4.6px;height:1.4px;background:#a7abb7"></i>
<i style="left:261.1px;top:1383.1px;width:4.6px;height:1.4px;background:#a7abb7"></i>
<div style="left:269.1px;top:1243.1px;width:20.3px;height:144.2px;background:#252836;border-radius:2.5px"></div>
<div style="left:278.9px;top:1244px;width:1.4px;height:142.6px;background:#555a6e"></div>
<div style="left:269.9px;top:1259.1px;width:8.7px;height:1.6px;background:#d6d8de"></div>
<div style="left:280.6px;top:1259.1px;width:8.1px;height:1.6px;background:#d6d8de"></div>
<svg width="20" height="22" style="left:249.7px;top:1248.9px"><path d="M.4 1.2L17.6 11L.4 20.8Z" fill="#14151f"/></svg>
<i style="left:192.2px;top:1146.9px;width:8.6px;height:8.6px;border-radius:50%;background:#f4555c;border:1px solid #3a2030;"></i>
<div class="sh" style="left:302.5px;top:1110.8px;width:119.4px;height:27.6px;color:#1f2027"><span>Vocal Main</span></div>
<svg width="48" height="48" viewBox="-24 -24 48 48" style="left:311.2px;top:1146.2px" fill="none" stroke="#1d2030" stroke-width="3"><path d="M-12.6 14.49A19.2 19.2 0 1 1 10.17 16.28"/><path d="M-0.21 0.34L-11.45 18.32"/></svg>
<span class="t kl" style="left:325.2px;top:1189px">A</span>
<svg width="48" height="48" viewBox="-24 -24 48 48" style="left:364.9px;top:1172.9px" fill="none" stroke="#1d2030" stroke-width="3"><path d="M-12.6 14.49A19.2 19.2 0 1 1 10.17 16.28"/><path d="M-0.21 0.34L-11.45 18.32"/></svg>
<span class="t kl" style="left:378.9px;top:1215.7px">B</span>
<span class="t" style="left:365.1px;top:1158.6px">Sends</span>
<svg width="48" height="56" viewBox="-24 -32 48 56" style="left:313.5px;top:1241.1px" fill="none" stroke="#1d2030" stroke-width="2.9"><path d="M4.05 -19.07A19.5 19.5 0 0 1 10.9 16.17"/><path d="M-10.9 16.17A19.5 19.5 0 0 1 -4.05 -19.07"/><path d="M0 -20.4V-.6" stroke-linecap="round" stroke-width="3"/><path d="M-6 -29.8H6L0 -23.3Z" fill="#2a2d3c" stroke="none"/></svg>
<div class="bx big" style="left:319.3px;top:1296.7px;width:36px;height:35.9px;">11</div>
<div class="bx " style="left:319.3px;top:1339.9px;width:36px;height:20.1px;">S</div>
<div class="bx " style="left:319.3px;top:1367.2px;width:36px;height:20.1px;"></div>
<i style="left:331.9px;top:1371.9px;width:10.8px;height:10.8px;border-radius:50%;background:#868a98;"></i>
<i style="left:383.3px;top:1244.8px;width:4.6px;height:1.4px;background:#a7abb7"></i>
<i style="left:383.3px;top:1259.2px;width:4.6px;height:1.4px;background:#5d6274"></i>
<i style="left:383.3px;top:1271.9px;width:4.6px;height:1.4px;background:#a7abb7"></i>
<i style="left:383.3px;top:1286.6px;width:4.6px;height:1.4px;background:#5d6274"></i>
<i style="left:383.3px;top:1301.2px;width:4.6px;height:1.4px;background:#a7abb7"></i>
<i style="left:383.3px;top:1314.2px;width:4.6px;height:1.4px;background:#5d6274"></i>
<i style="left:383.3px;top:1328.5px;width:4.6px;height:1.4px;background:#a7abb7"></i>
<i style="left:383.3px;top:1341.3px;width:4.6px;height:1.4px;background:#5d6274"></i>
<i style="left:383.3px;top:1350.8px;width:4.6px;height:1.4px;background:#a7abb7"></i>
<i style="left:383.3px;top:1360.6px;width:4.6px;height:1.4px;background:#5d6274"></i>
<i style="left:383.3px;top:1368.7px;width:4.6px;height:1.4px;background:#a7abb7"></i>
<i style="left:383.3px;top:1376.8px;width:4.6px;height:1.4px;background:#a7abb7"></i>
<i style="left:383.3px;top:1383.1px;width:4.6px;height:1.4px;background:#a7abb7"></i>
<div style="left:391.3px;top:1243.1px;width:20.3px;height:144.2px;background:#252836;border-radius:2.5px"></div>
<div style="left:401.1px;top:1244px;width:1.4px;height:142.6px;background:#555a6e"></div>
<div style="left:392.1px;top:1259.1px;width:8.7px;height:1.6px;background:#d6d8de"></div>
<div style="left:402.8px;top:1259.1px;width:8.1px;height:1.6px;background:#d6d8de"></div>
<svg width="20" height="22" style="left:371.9px;top:1270px"><path d="M.4 1.2L17.6 11L.4 20.8Z" fill="#14151f"/></svg>
<i style="left:378.4px;top:1277.1px;width:8.6px;height:8.6px;border-radius:50%;background:#16a3c8;border:1px solid #14151f;"></i>
<div class="sh" style="left:424.7px;top:1110.8px;width:119.4px;height:27.6px;color:#1f2027"><span>Vocal Harmon</span></div>
<svg width="48" height="48" viewBox="-24 -24 48 48" style="left:433.4px;top:1146.2px" fill="none" stroke="#1d2030" stroke-width="3"><path d="M-12.6 14.49A19.2 19.2 0 1 1 10.17 16.28"/><path d="M-0.21 0.34L-11.45 18.32"/></svg>
<span class="t kl" style="left:447.4px;top:1189px">A</span>
<svg width="48" height="48" viewBox="-24 -24 48 48" style="left:487.1px;top:1172.9px" fill="none" stroke="#1d2030" stroke-width="3"><path d="M-12.6 14.49A19.2 19.2 0 1 1 10.17 16.28"/><path d="M-0.21 0.34L-11.45 18.32"/></svg>
<span class="t kl" style="left:501.1px;top:1215.7px">B</span>
<span class="t" style="left:487.3px;top:1158.6px">Sends</span>
<svg width="48" height="56" viewBox="-24 -32 48 56" style="left:435.7px;top:1241.1px" fill="none" stroke="#1d2030" stroke-width="2.9"><path d="M4.05 -19.07A19.5 19.5 0 0 1 10.9 16.17"/><path d="M-10.9 16.17A19.5 19.5 0 0 1 -4.05 -19.07"/><path d="M0 -20.4V-.6" stroke-linecap="round" stroke-width="3"/><path d="M-6 -29.8H6L0 -23.3Z" fill="#2a2d3c" stroke="none"/></svg>
<div class="bx big" style="left:441.5px;top:1296.7px;width:36px;height:35.9px;">12</div>
<div class="bx " style="left:441.5px;top:1339.9px;width:36px;height:20.1px;">S</div>
<div class="bx " style="left:441.5px;top:1367.2px;width:36px;height:20.1px;"></div>
<i style="left:454.1px;top:1371.9px;width:10.8px;height:10.8px;border-radius:50%;background:#868a98;"></i>
<i style="left:505.5px;top:1244.8px;width:4.6px;height:1.4px;background:#a7abb7"></i>
<i style="left:505.5px;top:1259.2px;width:4.6px;height:1.4px;background:#5d6274"></i>
<i style="left:505.5px;top:1271.9px;width:4.6px;height:1.4px;background:#a7abb7"></i>
<i style="left:505.5px;top:1286.6px;width:4.6px;height:1.4px;background:#5d6274"></i>
<i style="left:505.5px;top:1301.2px;width:4.6px;height:1.4px;background:#a7abb7"></i>
<i style="left:505.5px;top:1314.2px;width:4.6px;height:1.4px;background:#5d6274"></i>
<i style="left:505.5px;top:1328.5px;width:4.6px;height:1.4px;background:#a7abb7"></i>
<i style="left:505.5px;top:1341.3px;width:4.6px;height:1.4px;background:#5d6274"></i>
<i style="left:505.5px;top:1350.8px;width:4.6px;height:1.4px;background:#a7abb7"></i>
<i style="left:505.5px;top:1360.6px;width:4.6px;height:1.4px;background:#5d6274"></i>
<i style="left:505.5px;top:1368.7px;width:4.6px;height:1.4px;background:#a7abb7"></i>
<i style="left:505.5px;top:1376.8px;width:4.6px;height:1.4px;background:#a7abb7"></i>
<i style="left:505.5px;top:1383.1px;width:4.6px;height:1.4px;background:#a7abb7"></i>
<div style="left:513.5px;top:1243.1px;width:20.3px;height:144.2px;background:#252836;border-radius:2.5px"></div>
<div style="left:523.3px;top:1244px;width:1.4px;height:142.6px;background:#555a6e"></div>
<div style="left:514.3px;top:1259.1px;width:8.7px;height:1.6px;background:#d6d8de"></div>
<div style="left:525px;top:1259.1px;width:8.1px;height:1.6px;background:#d6d8de"></div>
<svg width="20" height="22" style="left:494.1px;top:1256px"><path d="M.4 1.2L17.6 11L.4 20.8Z" fill="#14151f"/></svg>
<i style="left:500.6px;top:1263.1px;width:8.6px;height:8.6px;border-radius:50%;background:#16a3c8;border:1px solid #14151f;"></i>
<div class="sh" style="left:546.9px;top:1110.8px;width:119.4px;height:27.6px;color:#1f2027"><span>Vocal Hum</span></div>
<svg width="48" height="48" viewBox="-24 -24 48 48" style="left:555.6px;top:1146.2px" fill="none" stroke="#1d2030" stroke-width="3"><path d="M-12.6 14.49A19.2 19.2 0 1 1 10.17 16.28"/><path d="M-0.21 0.34L-11.45 18.32"/></svg>
<span class="t kl" style="left:569.6px;top:1189px">A</span>
<svg width="48" height="48" viewBox="-24 -24 48 48" style="left:609.3px;top:1172.9px" fill="none" stroke="#1d2030" stroke-width="3"><path d="M-12.6 14.49A19.2 19.2 0 1 1 10.17 16.28"/><path d="M-0.21 0.34L-11.45 18.32"/></svg>
<span class="t kl" style="left:623.3px;top:1215.7px">B</span>
<span class="t" style="left:609.5px;top:1158.6px">Sends</span>
<svg width="48" height="56" viewBox="-24 -32 48 56" style="left:557.9px;top:1241.1px" fill="none" stroke="#1d2030" stroke-width="2.9"><path d="M4.05 -19.07A19.5 19.5 0 0 1 10.9 16.17"/><path d="M-10.9 16.17A19.5 19.5 0 0 1 -4.05 -19.07"/><path d="M0 -20.4V-.6" stroke-linecap="round" stroke-width="3"/><path d="M-6 -29.8H6L0 -23.3Z" fill="#2a2d3c" stroke="none"/></svg>
<div class="bx big" style="left:563.7px;top:1296.7px;width:36px;height:35.9px;">13</div>
<div class="bx " style="left:563.7px;top:1339.9px;width:36px;height:20.1px;">S</div>
<div class="bx " style="left:563.7px;top:1367.2px;width:36px;height:20.1px;"></div>
<i style="left:576.3px;top:1371.9px;width:10.8px;height:10.8px;border-radius:50%;background:#868a98;"></i>
<i style="left:627.7px;top:1244.8px;width:4.6px;height:1.4px;background:#a7abb7"></i>
<i style="left:627.7px;top:1259.2px;width:4.6px;height:1.4px;background:#5d6274"></i>
<i style="left:627.7px;top:1271.9px;width:4.6px;height:1.4px;background:#a7abb7"></i>
<i style="left:627.7px;top:1286.6px;width:4.6px;height:1.4px;background:#5d6274"></i>
<i style="left:627.7px;top:1301.2px;width:4.6px;height:1.4px;background:#a7abb7"></i>
<i style="left:627.7px;top:1314.2px;width:4.6px;height:1.4px;background:#5d6274"></i>
<i style="left:627.7px;top:1328.5px;width:4.6px;height:1.4px;background:#a7abb7"></i>
<i style="left:627.7px;top:1341.3px;width:4.6px;height:1.4px;background:#5d6274"></i>
<i style="left:627.7px;top:1350.8px;width:4.6px;height:1.4px;background:#a7abb7"></i>
<i style="left:627.7px;top:1360.6px;width:4.6px;height:1.4px;background:#5d6274"></i>
<i style="left:627.7px;top:1368.7px;width:4.6px;height:1.4px;background:#a7abb7"></i>
<i style="left:627.7px;top:1376.8px;width:4.6px;height:1.4px;background:#a7abb7"></i>
<i style="left:627.7px;top:1383.1px;width:4.6px;height:1.4px;background:#a7abb7"></i>
<div style="left:635.7px;top:1243.1px;width:20.3px;height:144.2px;background:#252836;border-radius:2.5px"></div>
<div style="left:645.5px;top:1244px;width:1.4px;height:142.6px;background:#555a6e"></div>
<div style="left:636.5px;top:1259.1px;width:8.7px;height:1.6px;background:#d6d8de"></div>
<div style="left:647.2px;top:1259.1px;width:8.1px;height:1.6px;background:#d6d8de"></div>
<svg width="20" height="22" style="left:616.3px;top:1265.2px"><path d="M.4 1.2L17.6 11L.4 20.8Z" fill="#14151f"/></svg>
<div class="sh" style="left:669.1px;top:1110.8px;width:119.4px;height:27.6px;color:#1f2027"><span>Vocal Adlib</span></div>
<svg width="48" height="48" viewBox="-24 -24 48 48" style="left:677.8px;top:1146.2px" fill="none" stroke="#1d2030" stroke-width="3"><path d="M-12.6 14.49A19.2 19.2 0 1 1 10.17 16.28"/><path d="M-0.21 0.34L-11.45 18.32"/></svg>
<span class="t kl" style="left:691.8px;top:1189px">A</span>
<svg width="48" height="48" viewBox="-24 -24 48 48" style="left:731.5px;top:1172.9px" fill="none" stroke="#1d2030" stroke-width="3"><path d="M-12.6 14.49A19.2 19.2 0 1 1 10.17 16.28"/><path d="M-0.21 0.34L-11.45 18.32"/></svg>
<span class="t kl" style="left:745.5px;top:1215.7px">B</span>
<span class="t" style="left:731.7px;top:1158.6px">Sends</span>
<svg width="48" height="56" viewBox="-24 -32 48 56" style="left:680.1px;top:1241.1px" fill="none" stroke="#1d2030" stroke-width="2.9"><path d="M4.05 -19.07A19.5 19.5 0 0 1 10.9 16.17"/><path d="M-10.9 16.17A19.5 19.5 0 0 1 -4.05 -19.07"/><path d="M0 -20.4V-.6" stroke-linecap="round" stroke-width="3"/><path d="M-6 -29.8H6L0 -23.3Z" fill="#2a2d3c" stroke="none"/></svg>
<div class="bx big" style="left:685.9px;top:1296.7px;width:36px;height:35.9px;">14</div>
<div class="bx " style="left:685.9px;top:1339.9px;width:36px;height:20.1px;">S</div>
<div class="bx " style="left:685.9px;top:1367.2px;width:36px;height:20.1px;"></div>
<i style="left:698.5px;top:1371.9px;width:10.8px;height:10.8px;border-radius:50%;background:#868a98;"></i>
<i style="left:749.9px;top:1244.8px;width:4.6px;height:1.4px;background:#a7abb7"></i>
<i style="left:749.9px;top:1259.2px;width:4.6px;height:1.4px;background:#5d6274"></i>
<i style="left:749.9px;top:1271.9px;width:4.6px;height:1.4px;background:#a7abb7"></i>
<i style="left:749.9px;top:1286.6px;width:4.6px;height:1.4px;background:#5d6274"></i>
<i style="left:749.9px;top:1301.2px;width:4.6px;height:1.4px;background:#a7abb7"></i>
<i style="left:749.9px;top:1314.2px;width:4.6px;height:1.4px;background:#5d6274"></i>
<i style="left:749.9px;top:1328.5px;width:4.6px;height:1.4px;background:#a7abb7"></i>
<i style="left:749.9px;top:1341.3px;width:4.6px;height:1.4px;background:#5d6274"></i>
<i style="left:749.9px;top:1350.8px;width:4.6px;height:1.4px;background:#a7abb7"></i>
<i style="left:749.9px;top:1360.6px;width:4.6px;height:1.4px;background:#5d6274"></i>
<i style="left:749.9px;top:1368.7px;width:4.6px;height:1.4px;background:#a7abb7"></i>
<i style="left:749.9px;top:1376.8px;width:4.6px;height:1.4px;background:#a7abb7"></i>
<i style="left:749.9px;top:1383.1px;width:4.6px;height:1.4px;background:#a7abb7"></i>
<div style="left:757.9px;top:1243.1px;width:20.3px;height:144.2px;background:#252836;border-radius:2.5px"></div>
<div style="left:767.7px;top:1244px;width:1.4px;height:142.6px;background:#555a6e"></div>
<div style="left:758.7px;top:1259.1px;width:8.7px;height:1.6px;background:#d6d8de"></div>
<div style="left:769.4px;top:1259.1px;width:8.1px;height:1.6px;background:#d6d8de"></div>
<svg width="20" height="22" style="left:738.5px;top:1265.2px"><path d="M.4 1.2L17.6 11L.4 20.8Z" fill="#14151f"/></svg>
<div class="sh" style="left:791.3px;top:1110.8px;width:150px;height:27.6px;color:#1f2027"><span>Rainstorm</span></div>
<svg width="22" height="22" viewBox="-11 -11 22 22" style="left:916.1px;top:1113.6px"><circle r="9.5" fill="none" stroke="#000" stroke-opacity=".75" stroke-width="1.3"/><path d="M-4.7 -2.3H4.7L0 5Z" fill="#000" fill-opacity=".8"/></svg>
<svg width="48" height="48" viewBox="-24 -24 48 48" style="left:812.3px;top:1146.2px" fill="none" stroke="#1d2030" stroke-width="3"><path d="M-12.6 14.49A19.2 19.2 0 1 1 10.17 16.28"/><path d="M-0.21 0.34L-11.45 18.32"/></svg>
<span class="t kl" style="left:826.3px;top:1189px">A</span>
<svg width="48" height="48" viewBox="-24 -24 48 48" style="left:866px;top:1172.9px" fill="none" stroke="#1d2030" stroke-width="3"><path d="M-12.6 14.49A19.2 19.2 0 1 1 10.17 16.28"/><path d="M-0.21 0.34L-11.45 18.32"/></svg>
<span class="t kl" style="left:880px;top:1215.7px">B</span>
<span class="t" style="left:866.2px;top:1158.6px">Sends</span>
<svg width="48" height="56" viewBox="-24 -32 48 56" style="left:807px;top:1241.1px" fill="none" stroke="#1d2030" stroke-width="2.9"><path d="M4.05 -19.07A19.5 19.5 0 0 1 10.9 16.17"/><path d="M-10.9 16.17A19.5 19.5 0 0 1 -4.05 -19.07"/><path d="M0 -20.4V-.6" stroke-linecap="round" stroke-width="3"/><path d="M-6 -29.8H6L0 -23.3Z" fill="#2a2d3c" stroke="none"/></svg>
<div class="bx big" style="left:812.8px;top:1296.7px;width:36px;height:35.9px;">15</div>
<div class="bx " style="left:812.8px;top:1339.9px;width:36px;height:20.1px;">S</div>
<div class="bx " style="left:812.8px;top:1367.2px;width:36px;height:20.1px;"></div>
<svg width="14" height="14" viewBox="-7 -7 14 14" style="left:823.8px;top:1370.3px"><circle r="5.7" fill="#12131c"/><path d="M1.95 -4.4V2" stroke="#edeef0" stroke-width="1.5"/><ellipse cx="-.2" cy="2" rx="2.7" ry="1.7" transform="rotate(-18 -.2 2)" fill="#edeef0"/></svg>
<i style="left:876.8px;top:1244.8px;width:4.6px;height:1.4px;background:#a7abb7"></i>
<i style="left:876.8px;top:1259.2px;width:4.6px;height:1.4px;background:#5d6274"></i>
<i style="left:876.8px;top:1271.9px;width:4.6px;height:1.4px;background:#a7abb7"></i>
<i style="left:876.8px;top:1286.6px;width:4.6px;height:1.4px;background:#5d6274"></i>
<i style="left:876.8px;top:1301.2px;width:4.6px;height:1.4px;background:#a7abb7"></i>
<i style="left:876.8px;top:1314.2px;width:4.6px;height:1.4px;background:#5d6274"></i>
<i style="left:876.8px;top:1328.5px;width:4.6px;height:1.4px;background:#a7abb7"></i>
<i style="left:876.8px;top:1341.3px;width:4.6px;height:1.4px;background:#5d6274"></i>
<i style="left:876.8px;top:1350.8px;width:4.6px;height:1.4px;background:#a7abb7"></i>
<i style="left:876.8px;top:1360.6px;width:4.6px;height:1.4px;background:#5d6274"></i>
<i style="left:876.8px;top:1368.7px;width:4.6px;height:1.4px;background:#a7abb7"></i>
<i style="left:876.8px;top:1376.8px;width:4.6px;height:1.4px;background:#a7abb7"></i>
<i style="left:876.8px;top:1383.1px;width:4.6px;height:1.4px;background:#a7abb7"></i>
<div style="left:884.8px;top:1243.1px;width:20.3px;height:144.2px;background:#252836;border-radius:2.5px"></div>
<div style="left:894.6px;top:1244px;width:1.4px;height:142.6px;background:#555a6e"></div>
<div style="left:885.6px;top:1259.1px;width:8.7px;height:1.6px;background:#d6d8de"></div>
<div style="left:896.3px;top:1259.1px;width:8.1px;height:1.6px;background:#d6d8de"></div>
<svg width="20" height="22" style="left:865.4px;top:1248.9px"><path d="M.4 1.2L17.6 11L.4 20.8Z" fill="#14151f"/></svg>
<span class="t sc" style="left:910.4px;top:1258.9px">0</span>
<span class="t sc" style="left:910.4px;top:1286px">12</span>
<span class="t sc" style="left:910.4px;top:1313.7px">24</span>
<span class="t sc" style="left:910.4px;top:1341px">36</span>
<span class="t sc" style="left:910.4px;top:1360.2px">48</span>
<div class="sh" style="left:1081.3px;top:1110.8px;width:119.5px;height:27.6px;color:#1f2027"><span>A<span style="margin-left:5.5px">Reverb</span></span></div>
<svg width="48" height="48" viewBox="-24 -24 48 48" style="left:1090px;top:1146.2px" fill="none" stroke="#8d91a1" stroke-width="3"><path d="M-12.6 14.49A19.2 19.2 0 1 1 10.17 16.28"/><path d="M-0.21 0.34L-11.45 18.32"/></svg>
<span class="t kl" style="left:1104px;top:1189px">A</span>
<svg width="48" height="48" viewBox="-24 -24 48 48" style="left:1143.7px;top:1172.9px" fill="none" stroke="#8d91a1" stroke-width="3"><path d="M-12.6 14.49A19.2 19.2 0 1 1 10.17 16.28"/><path d="M-0.21 0.34L-11.45 18.32"/></svg>
<span class="t kl" style="left:1157.7px;top:1215.7px">B</span>
<span class="t" style="left:1143.9px;top:1158.6px">Sends</span>
<svg width="48" height="56" viewBox="-24 -32 48 56" style="left:1092.3px;top:1241.1px" fill="none" stroke="#1d2030" stroke-width="2.9"><path d="M4.05 -19.07A19.5 19.5 0 0 1 10.9 16.17"/><path d="M-10.9 16.17A19.5 19.5 0 0 1 -4.05 -19.07"/><path d="M0 -20.4V-.6" stroke-linecap="round" stroke-width="3"/><path d="M-6 -29.8H6L0 -23.3Z" fill="#2a2d3c" stroke="none"/></svg>
<div class="bx big" style="left:1098.1px;top:1296.7px;width:36px;height:35.9px;">A</div>
<div class="bx " style="left:1098.1px;top:1339.9px;width:36px;height:20.1px;">S</div>
<i style="left:1162.1px;top:1244.8px;width:4.6px;height:1.4px;background:#a7abb7"></i>
<i style="left:1162.1px;top:1259.2px;width:4.6px;height:1.4px;background:#5d6274"></i>
<i style="left:1162.1px;top:1271.9px;width:4.6px;height:1.4px;background:#a7abb7"></i>
<i style="left:1162.1px;top:1286.6px;width:4.6px;height:1.4px;background:#5d6274"></i>
<i style="left:1162.1px;top:1301.2px;width:4.6px;height:1.4px;background:#a7abb7"></i>
<i style="left:1162.1px;top:1314.2px;width:4.6px;height:1.4px;background:#5d6274"></i>
<i style="left:1162.1px;top:1328.5px;width:4.6px;height:1.4px;background:#a7abb7"></i>
<i style="left:1162.1px;top:1341.3px;width:4.6px;height:1.4px;background:#5d6274"></i>
<i style="left:1162.1px;top:1350.8px;width:4.6px;height:1.4px;background:#a7abb7"></i>
<i style="left:1162.1px;top:1360.6px;width:4.6px;height:1.4px;background:#5d6274"></i>
<i style="left:1162.1px;top:1368.7px;width:4.6px;height:1.4px;background:#a7abb7"></i>
<i style="left:1162.1px;top:1376.8px;width:4.6px;height:1.4px;background:#a7abb7"></i>
<i style="left:1162.1px;top:1383.1px;width:4.6px;height:1.4px;background:#a7abb7"></i>
<div style="left:1170.1px;top:1243.1px;width:20.3px;height:144.2px;background:#252836;border-radius:2.5px"></div>
<div style="left:1179.9px;top:1244px;width:1.4px;height:142.6px;background:#555a6e"></div>
<div style="left:1170.9px;top:1259.1px;width:8.7px;height:1.6px;background:#d6d8de"></div>
<div style="left:1181.6px;top:1259.1px;width:8.1px;height:1.6px;background:#d6d8de"></div>
<svg width="20" height="22" style="left:1150.7px;top:1248.4px"><path d="M.4 1.2L17.6 11L.4 20.8Z" fill="#14151f"/></svg>
<div class="sh" style="left:1203.8px;top:1110.8px;width:119.5px;height:27.6px;color:#1f2027"><span>B<span style="margin-left:5.5px">Delay</span></span></div>
<svg width="48" height="48" viewBox="-24 -24 48 48" style="left:1212.5px;top:1146.2px" fill="none" stroke="#8d91a1" stroke-width="3"><path d="M-12.6 14.49A19.2 19.2 0 1 1 10.17 16.28"/><path d="M-0.21 0.34L-11.45 18.32"/></svg>
<span class="t kl" style="left:1226.5px;top:1189px">A</span>
<svg width="48" height="48" viewBox="-24 -24 48 48" style="left:1266.2px;top:1172.9px" fill="none" stroke="#8d91a1" stroke-width="3"><path d="M-12.6 14.49A19.2 19.2 0 1 1 10.17 16.28"/><path d="M-0.21 0.34L-11.45 18.32"/></svg>
<span class="t kl" style="left:1280.2px;top:1215.7px">B</span>
<span class="t" style="left:1266.4px;top:1158.6px">Sends</span>
<svg width="48" height="56" viewBox="-24 -32 48 56" style="left:1214.8px;top:1241.1px" fill="none" stroke="#1d2030" stroke-width="2.9"><path d="M4.05 -19.07A19.5 19.5 0 0 1 10.9 16.17"/><path d="M-10.9 16.17A19.5 19.5 0 0 1 -4.05 -19.07"/><path d="M0 -20.4V-.6" stroke-linecap="round" stroke-width="3"/><path d="M-6 -29.8H6L0 -23.3Z" fill="#2a2d3c" stroke="none"/></svg>
<div class="bx big" style="left:1220.6px;top:1296.7px;width:36px;height:35.9px;">B</div>
<div class="bx " style="left:1220.6px;top:1339.9px;width:36px;height:20.1px;">S</div>
<i style="left:1284.6px;top:1244.8px;width:4.6px;height:1.4px;background:#a7abb7"></i>
<i style="left:1284.6px;top:1259.2px;width:4.6px;height:1.4px;background:#5d6274"></i>
<i style="left:1284.6px;top:1271.9px;width:4.6px;height:1.4px;background:#a7abb7"></i>
<i style="left:1284.6px;top:1286.6px;width:4.6px;height:1.4px;background:#5d6274"></i>
<i style="left:1284.6px;top:1301.2px;width:4.6px;height:1.4px;background:#a7abb7"></i>
<i style="left:1284.6px;top:1314.2px;width:4.6px;height:1.4px;background:#5d6274"></i>
<i style="left:1284.6px;top:1328.5px;width:4.6px;height:1.4px;background:#a7abb7"></i>
<i style="left:1284.6px;top:1341.3px;width:4.6px;height:1.4px;background:#5d6274"></i>
<i style="left:1284.6px;top:1350.8px;width:4.6px;height:1.4px;background:#a7abb7"></i>
<i style="left:1284.6px;top:1360.6px;width:4.6px;height:1.4px;background:#5d6274"></i>
<i style="left:1284.6px;top:1368.7px;width:4.6px;height:1.4px;background:#a7abb7"></i>
<i style="left:1284.6px;top:1376.8px;width:4.6px;height:1.4px;background:#a7abb7"></i>
<i style="left:1284.6px;top:1383.1px;width:4.6px;height:1.4px;background:#a7abb7"></i>
<div style="left:1292.6px;top:1243.1px;width:20.3px;height:144.2px;background:#252836;border-radius:2.5px"></div>
<div style="left:1302.4px;top:1244px;width:1.4px;height:142.6px;background:#555a6e"></div>
<div style="left:1293.4px;top:1259.1px;width:8.7px;height:1.6px;background:#d6d8de"></div>
<div style="left:1304.1px;top:1259.1px;width:8.1px;height:1.6px;background:#d6d8de"></div>
<svg width="20" height="22" style="left:1273.2px;top:1248.4px"><path d="M.4 1.2L17.6 11L.4 20.8Z" fill="#14151f"/></svg>
<div class="sh" style="left:1326.1px;top:1110.8px;width:196.4px;height:27.6px;color:#e6e6e6"><span style="margin-left:2.6px">Main</span></div>
<div style="left:1328px;top:1170.8px;width:48.4px;height:1.5px;background:#e6e7ec"></div>
<div style="left:1328px;top:1198.1px;width:102.6px;height:1.5px;background:#e6e7ec"></div>
<div class="bx " style="left:1378px;top:1161.2px;width:41.1px;height:20.5px;">Post</div>
<div class="bx " style="left:1432.3px;top:1189px;width:41.5px;height:19.8px;">Post</div>
<span class="t" style="left:1429.2px;top:1158.8px">Sends</span>
<svg width="48" height="56" viewBox="-24 -32 48 56" style="left:1370.5px;top:1241.1px" fill="none" stroke="#1d2030" stroke-width="2.9"><path d="M4.05 -19.07A19.5 19.5 0 0 1 10.9 16.17"/><path d="M-10.9 16.17A19.5 19.5 0 0 1 -4.05 -19.07"/><path d="M0 -20.4V-.6" stroke-linecap="round" stroke-width="3"/><path d="M-6 -29.8H6L0 -23.3Z" fill="#2a2d3c" stroke="none"/></svg>
<i style="left:1440.8px;top:1244.8px;width:4.6px;height:1.4px;background:#a7abb7"></i>
<i style="left:1440.8px;top:1259.2px;width:4.6px;height:1.4px;background:#5d6274"></i>
<i style="left:1440.8px;top:1271.9px;width:4.6px;height:1.4px;background:#a7abb7"></i>
<i style="left:1440.8px;top:1286.6px;width:4.6px;height:1.4px;background:#5d6274"></i>
<i style="left:1440.8px;top:1301.2px;width:4.6px;height:1.4px;background:#a7abb7"></i>
<i style="left:1440.8px;top:1314.2px;width:4.6px;height:1.4px;background:#5d6274"></i>
<i style="left:1440.8px;top:1328.5px;width:4.6px;height:1.4px;background:#a7abb7"></i>
<i style="left:1440.8px;top:1341.3px;width:4.6px;height:1.4px;background:#5d6274"></i>
<i style="left:1440.8px;top:1350.8px;width:4.6px;height:1.4px;background:#a7abb7"></i>
<i style="left:1440.8px;top:1360.6px;width:4.6px;height:1.4px;background:#5d6274"></i>
<i style="left:1440.8px;top:1368.7px;width:4.6px;height:1.4px;background:#a7abb7"></i>
<i style="left:1440.8px;top:1376.8px;width:4.6px;height:1.4px;background:#a7abb7"></i>
<i style="left:1440.8px;top:1383.1px;width:4.6px;height:1.4px;background:#a7abb7"></i>
<div style="left:1448.8px;top:1243.1px;width:20.3px;height:144.2px;background:#252836;border-radius:2.5px"></div>
<div style="left:1458.6px;top:1244px;width:1.4px;height:142.6px;background:#555a6e"></div>
<div style="left:1449.6px;top:1259.1px;width:8.7px;height:1.6px;background:#d6d8de"></div>
<div style="left:1460.3px;top:1259.1px;width:8.1px;height:1.6px;background:#d6d8de"></div>
<svg width="20" height="22" style="left:1429.4px;top:1249px"><path d="M.4 1.2L17.6 11L.4 20.8Z" fill="#14151f"/></svg>
<span class="t sc" style="left:1474.4px;top:1258.9px">0</span>
<span class="t sc" style="left:1474.4px;top:1286px">12</span>
<span class="t sc" style="left:1474.4px;top:1313.7px">24</span>
<span class="t sc" style="left:1474.4px;top:1341px">36</span>
<span class="t sc" style="left:1474.4px;top:1360.2px">48</span>
<div class="bx " style="left:1374.7px;top:1312.8px;width:39.4px;height:20px;">Solo</div>
<svg width="48" height="52" viewBox="-24 -24 48 52" style="left:1370.3px;top:1337.6px" fill="none" stroke-width="2.9"><path d="M-10.9 16.17A19.5 19.5 0 1 1 19 4.39" stroke="#2f8cf0"/><path d="M18.08 7.3A19.5 19.5 0 0 1 10.9 16.17" stroke="#1d2030"/><path d="M-1.56 -0.36L19.88 4.59" stroke="#1d2030" stroke-width="2.8"/><path d="M-3.2 20.8A5.9 5.9 0 1 1 3.2 20.8" stroke="#4c4f58" stroke-width="2.1"/><path d="M-5.2 17.4L-2.7 22.3M5.2 17.4L2.7 22.3" stroke="#4c4f58" stroke-width="3.1"/></svg>
</div>
<div id="callouts" style="left:0;top:0;width:1720px;height:1672px">
<span class="co" style="left:703px;top:26.5px">9</span>
<span class="co" style="left:1655.5px;top:315.3px">10</span>
<span class="co" style="left:1655.5px;top:611.5px">11</span>
<span class="co" style="left:1655.5px;top:866.6px">12</span>
<span class="co" style="left:1659px;top:1104px">13</span>
<span class="co" style="left:1075px;top:1547.3px">14</span>
<span class="co" style="left:911.7px;top:1530.5px">15</span>
<span class="co" style="left:262.8px;top:1614.2px">16</span>
<svg width="1720" height="1672" style="left:0;top:0"><rect x="680.6" y="0" width="3.6" height="315.5" fill="#000"/><rect x="680.6" y="-1" width="70.4" height="4.7" fill="#000"/><rect x="1715" y="301" width="3.6" height="69.7" fill="#000"/><rect x="1403" y="367.1" width="315.6" height="3.6" fill="#000"/><rect x="1716.6" y="595" width="3.6" height="70" fill="#000"/><rect x="1206" y="661.4" width="514" height="3.6" fill="#000"/><rect x="1716.6" y="849" width="3.6" height="70" fill="#000"/><rect x="1218.6" y="915.4" width="501.4" height="3.6" fill="#000"/><rect x="1711.7" y="1086" width="3.6" height="70" fill="#000"/><rect x="1213" y="1086" width="502.3" height="3.6" fill="#000"/><rect x="1061.2" y="1103.8" width="3.6" height="500.5" fill="#000"/><rect x="1061.2" y="1600.7" width="70.6" height="3.6" fill="#000"/><rect x="974.6" y="1084.8" width="3.6" height="500.5" fill="#000"/><rect x="908" y="1581.7" width="70.2" height="3.6" fill="#000"/><rect x="249.1" y="1377.2" width="3.6" height="295.8" fill="#000"/><rect x="249.1" y="1668.3" width="69.5" height="4.7" fill="#000"/></svg>
</div>
</body></html>
